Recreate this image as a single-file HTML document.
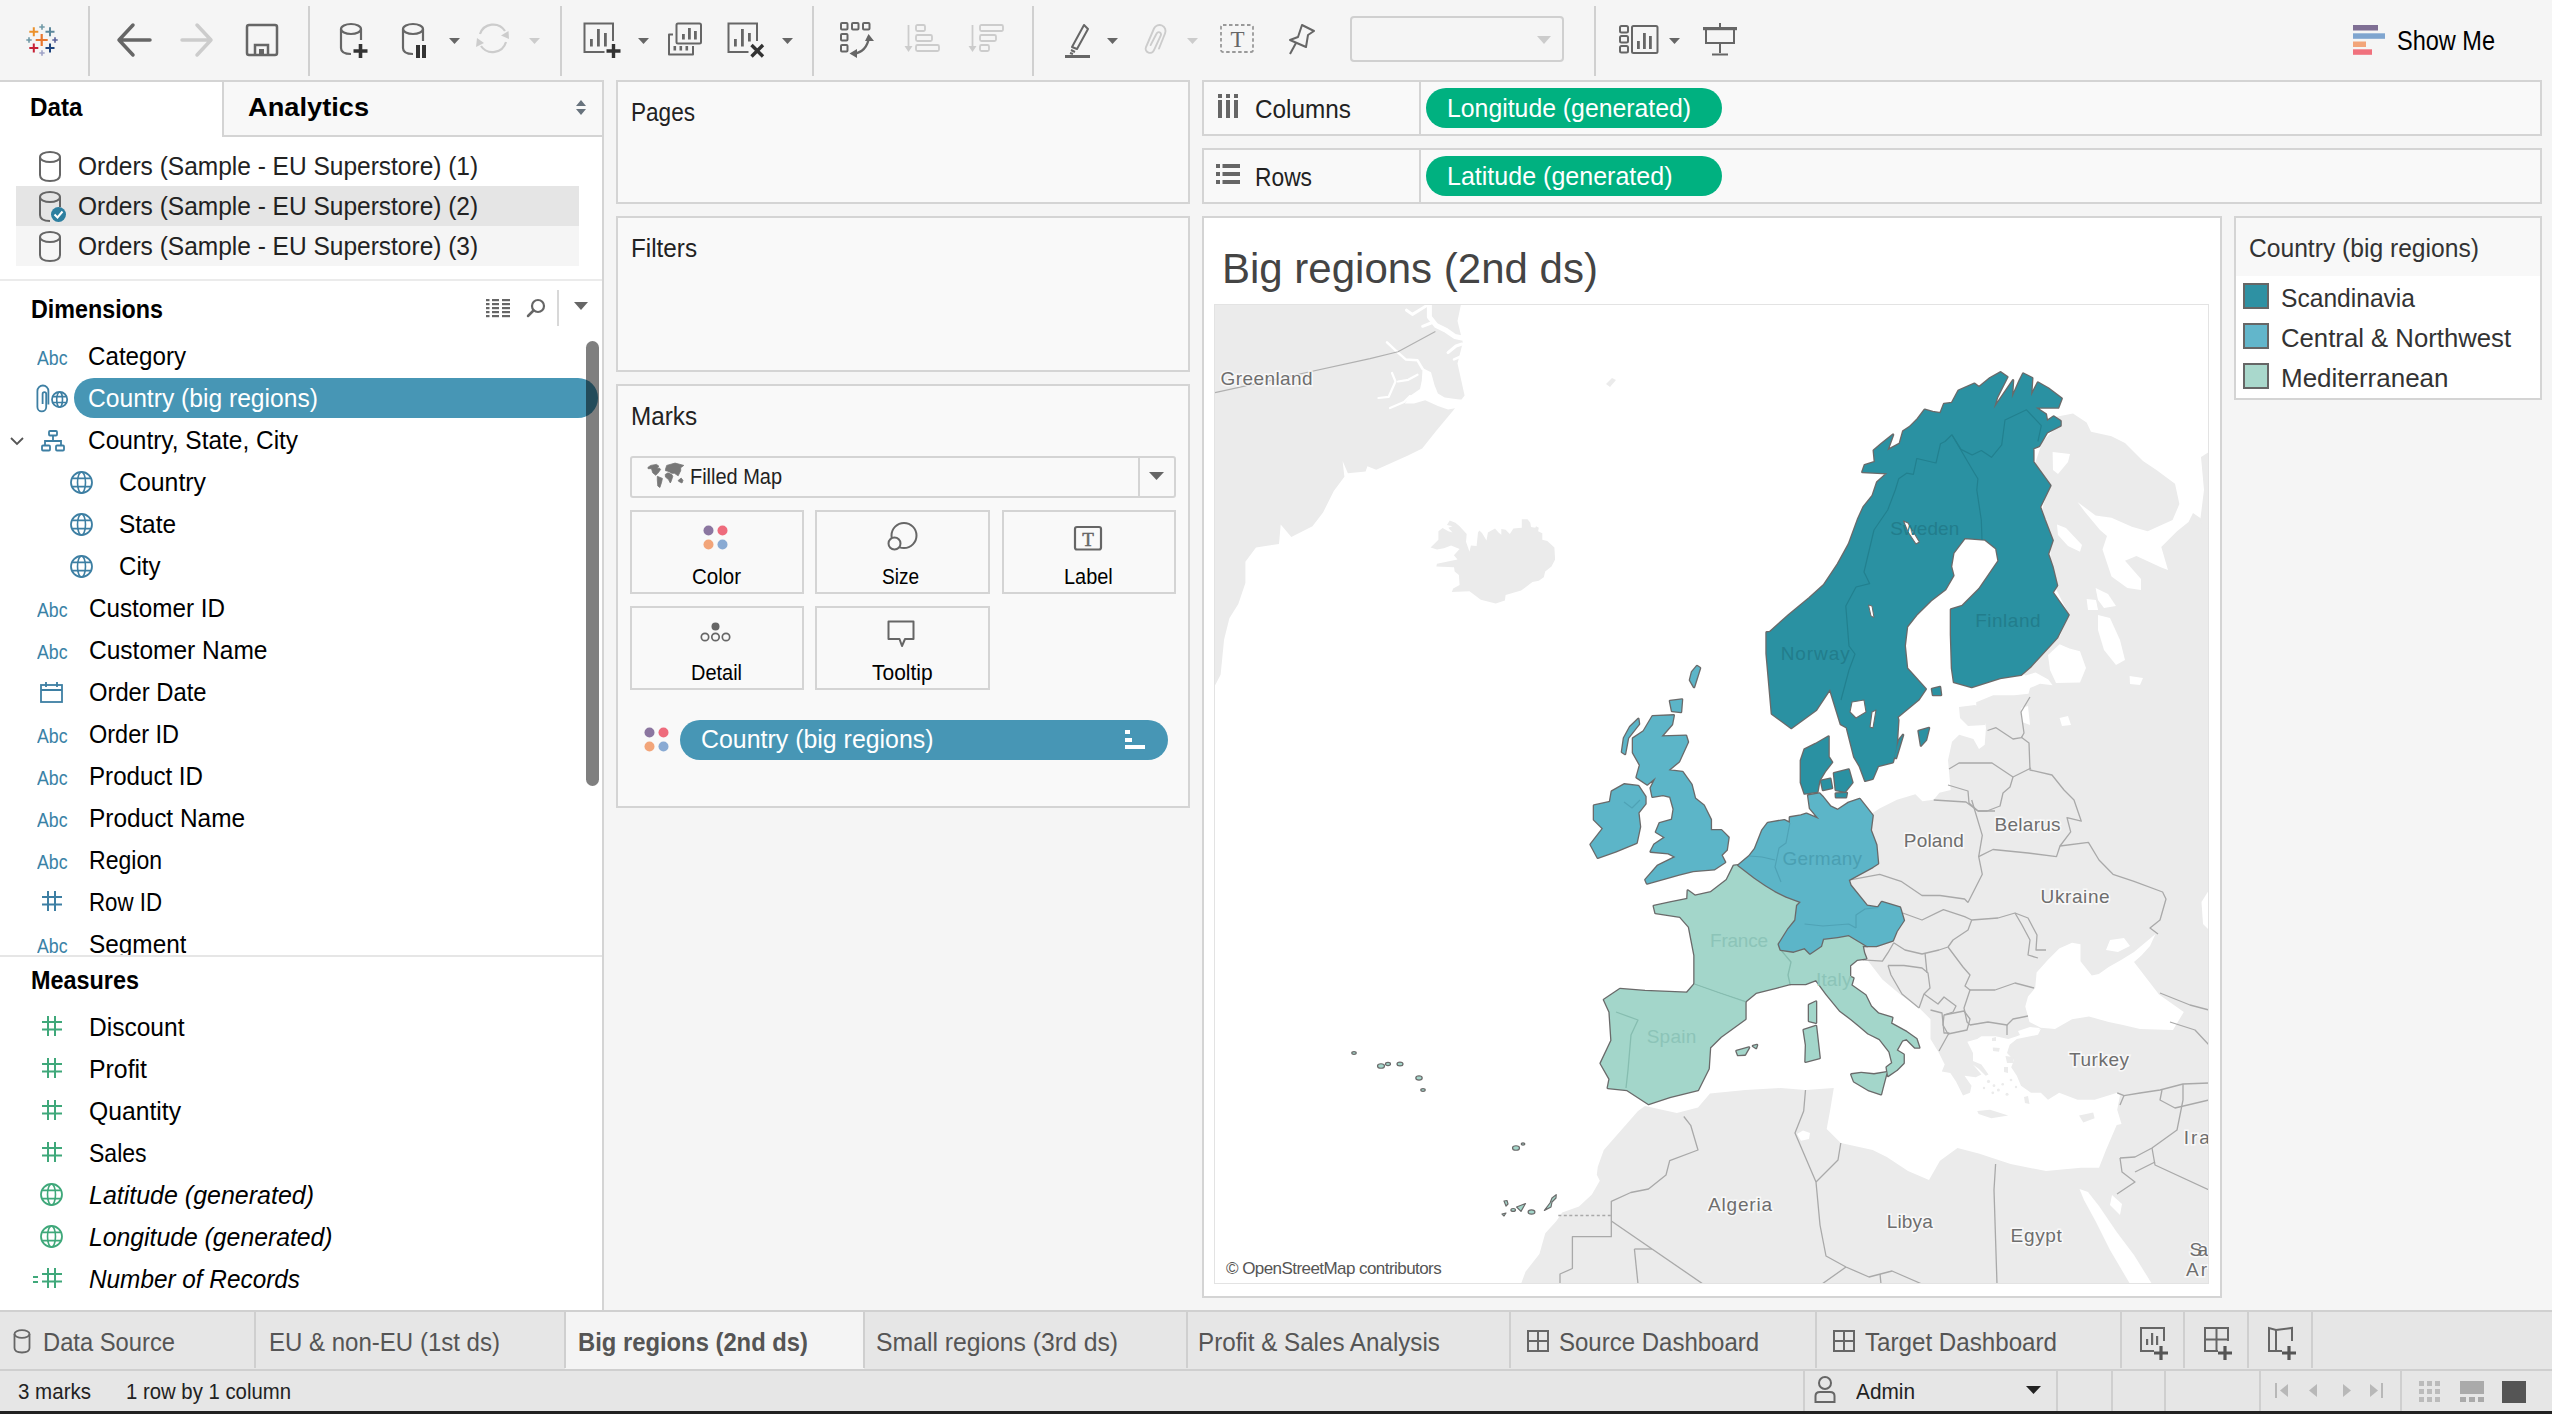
<!DOCTYPE html>
<html><head><meta charset="utf-8">
<style>
*{margin:0;padding:0;box-sizing:border-box}
html,body{width:2552px;height:1414px;overflow:hidden;background:#f5f5f5;font-family:"Liberation Sans",sans-serif;color:#000;position:relative}
.a{position:absolute}
.t{position:absolute;white-space:nowrap;line-height:1}
svg{position:absolute;overflow:visible}
</style></head><body>
<div class="a" style="left:0px;top:0px;width:2552px;height:80px;background:#f5f5f5;"></div>
<div class="a" style="left:0px;top:80px;width:603px;height:1230px;background:#fff;"></div>
<div class="a" style="left:0px;top:80px;width:604px;height:2px;background:#d4d4d4;"></div>
<div class="a" style="left:602px;top:80px;width:2px;height:1230px;background:#d4d4d4;"></div>
<div class="a" style="left:222px;top:82px;width:380px;height:55px;background:#f8f8f8;border-left:2px solid #d4d4d4;border-bottom:2px solid #d4d4d4"></div>
<div class="t" style="left:30.0px;top:94.0px;font-size:26px;color:#000;transform:scaleX(0.932);transform-origin:0 0;font-weight:bold;">Data</div>
<div class="t" style="left:248.0px;top:94.0px;font-size:26px;color:#000;transform:scaleX(1.047);transform-origin:0 0;font-weight:bold;">Analytics</div>
<svg style="left:574px;top:99px" width="14" height="18" viewBox="0 0 14 18"><path d="M7 1 L12 7 H2Z M2 10 H12 L7 16Z" fill="#68737d"/></svg>
<div class="a" style="left:88px;top:6px;width:2px;height:70px;background:#d0d0d0;"></div>
<div class="a" style="left:308px;top:6px;width:2px;height:70px;background:#d0d0d0;"></div>
<div class="a" style="left:560px;top:6px;width:2px;height:70px;background:#d0d0d0;"></div>
<div class="a" style="left:812px;top:6px;width:2px;height:70px;background:#d0d0d0;"></div>
<div class="a" style="left:1032px;top:6px;width:2px;height:70px;background:#d0d0d0;"></div>
<div class="a" style="left:1594px;top:6px;width:2px;height:70px;background:#d0d0d0;"></div>
<svg style="left:0px;top:0px" width="90" height="80" viewBox="0 0 90 80"><path d="M35.7 40H47.7M41.7 34V46" stroke="#e8762d" stroke-width="2.2"/><path d="M29.299999999999997 31.8H38.3M33.8 27.3V36.3" stroke="#eb912b" stroke-width="2"/><path d="M45.5 31.8H54.5M50 27.3V36.3" stroke="#5b879b" stroke-width="2"/><path d="M29.299999999999997 48H38.3M33.8 43.5V52.5" stroke="#c72035" stroke-width="2"/><path d="M45.5 48H54.5M50 43.5V52.5" stroke="#1f457e" stroke-width="2"/><path d="M39.3 27H44.7M42 24.3V29.7" stroke="#7099a6" stroke-width="1.6"/><path d="M39.3 53H44.7M42 50.3V55.7" stroke="#9fa3c7" stroke-width="1.6"/><path d="M26.3 40H31.7M29 37.3V42.7" stroke="#7099a6" stroke-width="1.6"/><path d="M52.3 40H57.7M55 37.3V42.7" stroke="#59629b" stroke-width="1.6"/></svg>
<svg style="left:115px;top:22px" width="40" height="38" viewBox="0 0 40 38"><path d="M18 3 L4 18 L18 33 M4 18 H35" fill="none" stroke="#666" stroke-width="3.5" stroke-linecap="round" stroke-linejoin="round"/></svg>
<svg style="left:179px;top:22px" width="40" height="38" viewBox="0 0 40 38"><path d="M18 3 L32 18 L18 33 M32 18 H3" fill="none" stroke="#cccccc" stroke-width="3.5" stroke-linecap="round" stroke-linejoin="round"/></svg>
<svg style="left:245px;top:23px" width="36" height="36" viewBox="0 0 36 36"><rect x="2" y="2" width="30" height="30" rx="2" fill="none" stroke="#666" stroke-width="2.5"/><path d="M10 32V22H23V32" fill="none" stroke="#666" stroke-width="2.5"/><rect x="14" y="26" width="5" height="6" fill="#666"/></svg>
<svg style="left:340px;top:23px" width="32" height="36" viewBox="0 0 32 36"><ellipse cx="11" cy="6" rx="10" ry="5" fill="none" stroke="#666" stroke-width="2.2"/><path d="M1 6V25C1 29 5 31 11 31M21 6V17" fill="none" stroke="#666" stroke-width="2.2"/><path d="M20.5 21V35M13.5 28H27.5" stroke="#333" stroke-width="3.6"/></svg>
<svg style="left:402px;top:23px" width="32" height="36" viewBox="0 0 32 36"><ellipse cx="11" cy="6" rx="10" ry="5" fill="none" stroke="#666" stroke-width="2.2"/><path d="M1 6V25C1 29 5 31 11 31M21 6V18" fill="none" stroke="#666" stroke-width="2.2"/><rect x="14" y="22" width="4" height="13" fill="#333"/><rect x="20" y="22" width="4" height="13" fill="#333"/></svg>
<svg style="left:449px;top:38px" width="12" height="7" viewBox="0 0 12 7"><path d="M0 0H11L5.5 6Z" fill="#666"/></svg>
<svg style="left:476px;top:23px" width="36" height="34" viewBox="0 0 36 34"><path d="M4 11 A14 14 0 0 1 29 8 M30 19 A14 14 0 0 1 5 23" fill="none" stroke="#cccccc" stroke-width="2.2"/><path d="M32.5 8 L25 12.5 L33 16Z M0 24 L8 20 L1 15Z" fill="#cccccc"/></svg>
<svg style="left:529px;top:38px" width="12" height="7" viewBox="0 0 12 7"><path d="M0 0H11L5.5 6Z" fill="#cccccc"/></svg>
<svg style="left:583px;top:22px" width="40" height="40" viewBox="0 0 40 40"><path d="M21.5 30H1.5V1.5H30V19" fill="none" stroke="#666" stroke-width="2"/><rect x="7" y="17" width="2.8" height="7.5" fill="#666"/><rect x="14" y="7" width="2.8" height="17.5" fill="#666"/><rect x="21" y="11" width="2.8" height="13.5" fill="#666"/><path d="M30.5 22V36M23.5 29H37.5" stroke="#333" stroke-width="3.4"/></svg>
<svg style="left:638px;top:38px" width="12" height="7" viewBox="0 0 12 7"><path d="M0 0H11L5.5 6Z" fill="#666"/></svg>
<svg style="left:667px;top:22px" width="40" height="36" viewBox="0 0 40 36"><rect x="9.5" y="1.5" width="24.5" height="20" rx="1.5" fill="none" stroke="#666" stroke-width="2"/><path d="M6 12.5H2V32.5H26V24" fill="none" stroke="#666" stroke-width="2" stroke-linejoin="round"/><rect x="15" y="12" width="2.8" height="5.5" fill="#666"/><rect x="21" y="6" width="2.8" height="11.5" fill="#666"/><rect x="27" y="9" width="2.8" height="8.5" fill="#666"/><rect x="6.5" y="24" width="2.6" height="4.5" fill="#666"/><rect x="12.5" y="24" width="2.6" height="4.5" fill="#666"/><rect x="18.5" y="24" width="2.6" height="4.5" fill="#666"/></svg>
<svg style="left:727px;top:22px" width="40" height="40" viewBox="0 0 40 40"><path d="M21.5 30H1.5V1.5H30V19" fill="none" stroke="#666" stroke-width="2"/><rect x="7" y="17" width="2.8" height="7.5" fill="#666"/><rect x="14" y="7" width="2.8" height="17.5" fill="#666"/><rect x="21" y="11" width="2.8" height="8.5" fill="#666"/><path d="M24.5 23L36 34.5M36 23L24.5 34.5" stroke="#333" stroke-width="3.4"/></svg>
<svg style="left:782px;top:38px" width="12" height="7" viewBox="0 0 12 7"><path d="M0 0H11L5.5 6Z" fill="#666"/></svg>
<svg style="left:840px;top:22px" width="40" height="40" viewBox="0 0 40 40"><rect x="1" y="1" width="6.5" height="6.5" rx="1" fill="none" stroke="#666" stroke-width="2"/><rect x="12" y="1" width="6.5" height="6.5" rx="1" fill="none" stroke="#666" stroke-width="2"/><rect x="23" y="1" width="6.5" height="6.5" rx="1" fill="none" stroke="#666" stroke-width="2"/><rect x="1" y="12" width="6.5" height="6.5" rx="1" fill="none" stroke="#666" stroke-width="2"/><rect x="1" y="23" width="6.5" height="6.5" rx="1" fill="none" stroke="#666" stroke-width="2"/><path d="M29 15 Q27 30 13 32" fill="none" stroke="#666" stroke-width="2.2"/><path d="M28.5 12 L34 19 L25 19Z M9.5 31.5 L17 27 L17 36Z" fill="#666"/></svg>
<svg style="left:903px;top:24px" width="40" height="32" viewBox="0 0 40 32"><path d="M5.5 1V25" stroke="#cccccc" stroke-width="1.8"/><path d="M1.5 22 H9.5 L5.5 28Z" fill="#cccccc"/><rect x="13" y="1" width="9" height="6" rx="1.5" fill="none" stroke="#cccccc" stroke-width="1.8"/><rect x="13" y="11" width="16" height="6" rx="1.5" fill="none" stroke="#cccccc" stroke-width="1.8"/><rect x="13" y="21" width="23" height="6" rx="1.5" fill="none" stroke="#cccccc" stroke-width="1.8"/></svg>
<svg style="left:967px;top:24px" width="40" height="32" viewBox="0 0 40 32"><path d="M5.5 1V25" stroke="#cccccc" stroke-width="1.8"/><path d="M1.5 22 H9.5 L5.5 28Z" fill="#cccccc"/><rect x="13" y="1" width="23" height="6" rx="1.5" fill="none" stroke="#cccccc" stroke-width="1.8"/><rect x="13" y="11" width="16" height="6" rx="1.5" fill="none" stroke="#cccccc" stroke-width="1.8"/><rect x="13" y="21" width="9" height="6" rx="1.5" fill="none" stroke="#cccccc" stroke-width="1.8"/></svg>
<svg style="left:1064px;top:22px" width="40" height="40" viewBox="0 0 40 40"><path d="M20 3 L24 7 L13 27 L8 25Z" fill="none" stroke="#666" stroke-width="2" stroke-linejoin="round"/><path d="M7 28 L11 30 M6 31 L9 32" stroke="#666" stroke-width="2"/><rect x="1" y="33" width="25" height="3" fill="#666"/></svg>
<svg style="left:1107px;top:38px" width="12" height="7" viewBox="0 0 12 7"><path d="M0 0H11L5.5 6Z" fill="#666"/></svg>
<svg style="left:1140px;top:24px" width="30" height="32" viewBox="0 0 30 32"><path d="M10.6 21.1 L16.6 9.5 A2.3 2.3 0 0 1 20.8 11.4 L14 26.2 A4.3 4.3 0 0 1 6 23 L14 4.5 A5.8 5.8 0 0 1 25 9.5 L19 24.5" fill="none" stroke="#cccccc" stroke-width="1.9" stroke-linecap="round"/></svg>
<svg style="left:1187px;top:38px" width="12" height="7" viewBox="0 0 12 7"><path d="M0 0H11L5.5 6Z" fill="#cccccc"/></svg>
<svg style="left:1220px;top:24px" width="36" height="31" viewBox="0 0 36 31"><rect x="1" y="1" width="32" height="27" rx="2" fill="none" stroke="#999" stroke-width="1.8" stroke-dasharray="3.5 2.5"/><text x="17.5" y="23" text-anchor="middle" font-family="Liberation Serif" font-size="23" fill="#666">T</text></svg>
<svg style="left:1286px;top:23px" width="32" height="34" viewBox="0 0 32 34"><path d="M16 2 L28 8 L22 12 L20 24 L4 17 L12 14Z" fill="none" stroke="#666" stroke-width="2" stroke-linejoin="round"/><path d="M10 20 L4 31" stroke="#666" stroke-width="2"/></svg>
<div class="a" style="left:1350px;top:16px;width:214px;height:46px;background:transparent;border:2px solid #d0d0d0;border-radius:4px"></div>
<svg style="left:1537px;top:36px" width="16" height="9" viewBox="0 0 16 9"><path d="M0 0H14L7 8Z" fill="#cccccc"/></svg>
<svg style="left:1619px;top:25px" width="44" height="32" viewBox="0 0 44 32"><rect x="1" y="1" width="8" height="6.5" rx="1.5" fill="none" stroke="#666" stroke-width="2"/><rect x="1" y="11" width="8" height="6.5" rx="1.5" fill="none" stroke="#666" stroke-width="2"/><rect x="1" y="21" width="8" height="6.5" rx="1.5" fill="none" stroke="#666" stroke-width="2"/><rect x="13" y="1" width="25.5" height="27" rx="1.5" fill="none" stroke="#666" stroke-width="2"/><rect x="18" y="16" width="2.8" height="8" fill="#666"/><rect x="24" y="8" width="2.8" height="16" fill="#666"/><rect x="30" y="11" width="2.8" height="13" fill="#666"/></svg>
<svg style="left:1669px;top:38px" width="12" height="7" viewBox="0 0 12 7"><path d="M0 0H11L5.5 6Z" fill="#666"/></svg>
<svg style="left:1702px;top:23px" width="38" height="36" viewBox="0 0 38 36"><rect x="1" y="4" width="34" height="3.2" fill="#666"/><path d="M18 0V4 M4 7V20H32V7 M18 20V30 M10 31.5H26" fill="none" stroke="#666" stroke-width="2"/></svg>
<svg style="left:2353px;top:25px" width="36" height="32" viewBox="0 0 36 32"><rect x="0" y="0" width="25" height="5.5" fill="#7f6f94"/><rect x="0" y="8.3" width="32" height="5.5" fill="#7fa5cf"/><rect x="0" y="16.5" width="13" height="5.5" fill="#f2a57a"/><rect x="0" y="24.3" width="19" height="5.5" fill="#f0717d"/></svg>
<div class="t" style="left:2397.0px;top:28.1px;font-size:27px;color:#000;transform:scaleX(0.871);transform-origin:0 0;">Show Me</div>
<div class="a" style="left:16px;top:186px;width:563px;height:40px;background:#e5e5e5;"></div>
<div class="a" style="left:16px;top:226px;width:563px;height:40px;background:#f5f5f5;"></div>
<svg style="left:39px;top:151px" width="24" height="34" viewBox="0 0 24 34"><ellipse cx="11" cy="6" rx="10" ry="5" fill="none" stroke="#666" stroke-width="2"/><path d="M1 6V24C1 28 5 30 11 30C17 30 21 28 21 24V6" fill="none" stroke="#666" stroke-width="2"/></svg>
<div class="t" style="left:78.0px;top:153.0px;font-size:26px;color:#222;transform:scaleX(0.942);transform-origin:0 0;">Orders (Sample - EU Superstore) (1)</div>
<svg style="left:39px;top:191px" width="28" height="34" viewBox="0 0 28 34"><ellipse cx="11" cy="6" rx="10" ry="5" fill="none" stroke="#666" stroke-width="2"/><path d="M1 6V24C1 28 5 30 11 30M21 6V16" fill="none" stroke="#666" stroke-width="2"/><circle cx="19.5" cy="23.5" r="7.5" fill="#2d7fa0"/><path d="M15.5 23.5 L18.5 26.5 L23.5 20.5" fill="none" stroke="#fff" stroke-width="2"/></svg>
<div class="t" style="left:78.0px;top:193.0px;font-size:26px;color:#222;transform:scaleX(0.942);transform-origin:0 0;">Orders (Sample - EU Superstore) (2)</div>
<svg style="left:39px;top:231px" width="24" height="34" viewBox="0 0 24 34"><ellipse cx="11" cy="6" rx="10" ry="5" fill="none" stroke="#666" stroke-width="2"/><path d="M1 6V24C1 28 5 30 11 30C17 30 21 28 21 24V6" fill="none" stroke="#666" stroke-width="2"/></svg>
<div class="t" style="left:78.0px;top:233.0px;font-size:26px;color:#222;transform:scaleX(0.942);transform-origin:0 0;">Orders (Sample - EU Superstore) (3)</div>
<div class="a" style="left:0px;top:279px;width:602px;height:2px;background:#ebebeb;"></div>
<div class="t" style="left:31.0px;top:295.5px;font-size:26px;color:#000;transform:scaleX(0.896);transform-origin:0 0;font-weight:bold;">Dimensions</div>
<svg style="left:486px;top:298px" width="26" height="20" viewBox="0 0 26 20"><rect x="0" y="1" width="3.5" height="2.2" fill="#666"/><rect x="6" y="1" width="7" height="2.2" fill="#666"/><rect x="16" y="1" width="8" height="2.2" fill="#666"/><rect x="0" y="5" width="3.5" height="2.2" fill="#666"/><rect x="6" y="5" width="7" height="2.2" fill="#666"/><rect x="16" y="5" width="8" height="2.2" fill="#666"/><rect x="0" y="9" width="3.5" height="2.2" fill="#666"/><rect x="6" y="9" width="7" height="2.2" fill="#666"/><rect x="16" y="9" width="8" height="2.2" fill="#666"/><rect x="0" y="13" width="3.5" height="2.2" fill="#666"/><rect x="6" y="13" width="7" height="2.2" fill="#666"/><rect x="16" y="13" width="8" height="2.2" fill="#666"/><rect x="0" y="17" width="3.5" height="2.2" fill="#666"/><rect x="6" y="17" width="7" height="2.2" fill="#666"/><rect x="16" y="17" width="8" height="2.2" fill="#666"/></svg>
<svg style="left:526px;top:298px" width="22" height="22" viewBox="0 0 22 22"><circle cx="12" cy="8" r="6" fill="none" stroke="#666" stroke-width="2.2"/><path d="M7.5 12.5 L2 18" stroke="#666" stroke-width="2.5" stroke-linecap="round"/></svg>
<div class="a" style="left:557px;top:290px;width:2px;height:36px;background:#d8d8d8;"></div>
<svg style="left:574px;top:302px" width="16" height="10" viewBox="0 0 16 10"><path d="M0 0H14L7 8Z" fill="#666"/></svg>
<div class="a" style="left:74px;top:378px;width:524px;height:40px;background:#4796b5;border-radius:20px"></div>
<div class="t" style="left:37.0px;top:348.5px;font-size:19.5px;color:#3a82a6;transform:scaleX(0.908);transform-origin:0 0;">Abc</div>
<div class="t" style="left:88.0px;top:343.0px;font-size:26px;color:#000;transform:scaleX(0.929);transform-origin:0 0;">Category</div>
<svg style="left:0px;top:340px" width="80" height="80" viewBox="0 340 80 80"><path d="M48.4 404.5 V391 A5.5 5.5 0 0 0 37.4 391 V407 A4.4 4.4 0 0 0 46.2 407 V394 A1.8 1.8 0 0 0 42.6 394 V404" fill="none" stroke="#3d7fa3" stroke-width="1.8"/></svg>
<svg style="left:51px;top:391.4px" width="17" height="17" viewBox="0 0 17 17"><circle cx="8.6" cy="8.6" r="7.6" fill="none" stroke="#3d7fa3" stroke-width="1.8"/><ellipse cx="8.6" cy="8.6" rx="2.89" ry="7.6" fill="none" stroke="#3d7fa3" stroke-width="1.6"/><path d="M1.61 5.64H15.59M1.61 11.56H15.59" stroke="#3d7fa3" stroke-width="1.6"/></svg>
<div class="t" style="left:88.0px;top:385.0px;font-size:26px;color:#fff;transform:scaleX(0.947);transform-origin:0 0;">Country (big regions)</div>
<svg style="left:41px;top:430px" width="26" height="24" viewBox="0 0 26 24"><rect x="8" y="1" width="8" height="4.5" rx="1" fill="none" stroke="#3d7fa3" stroke-width="1.8"/><path d="M12 5.5V11M4 15V11H20V15" fill="none" stroke="#3d7fa3" stroke-width="1.8"/><rect x="1" y="15.5" width="8" height="5" rx="1" fill="none" stroke="#3d7fa3" stroke-width="1.8"/><rect x="15" y="15.5" width="8" height="5" rx="1" fill="none" stroke="#3d7fa3" stroke-width="1.8"/></svg>
<svg style="left:9.5px;top:437px" width="16" height="10" viewBox="0 0 16 10"><path d="M1 1L7 7L13 1" fill="none" stroke="#555" stroke-width="1.8"/></svg>
<div class="t" style="left:88.0px;top:427.0px;font-size:26px;color:#000;transform:scaleX(0.940);transform-origin:0 0;">Country, State, City</div>
<svg style="left:70px;top:471px" width="24" height="24" viewBox="0 0 24 24"><circle cx="11.5" cy="11.5" r="10.5" fill="none" stroke="#3d7fa3" stroke-width="1.8"/><ellipse cx="11.5" cy="11.5" rx="3.99" ry="10.5" fill="none" stroke="#3d7fa3" stroke-width="1.6"/><path d="M1.84 7.41H21.16M1.84 15.59H21.16" stroke="#3d7fa3" stroke-width="1.6"/></svg>
<div class="t" style="left:119.0px;top:469.0px;font-size:26px;color:#000;transform:scaleX(0.956);transform-origin:0 0;">Country</div>
<svg style="left:70px;top:513px" width="24" height="24" viewBox="0 0 24 24"><circle cx="11.5" cy="11.5" r="10.5" fill="none" stroke="#3d7fa3" stroke-width="1.8"/><ellipse cx="11.5" cy="11.5" rx="3.99" ry="10.5" fill="none" stroke="#3d7fa3" stroke-width="1.6"/><path d="M1.84 7.41H21.16M1.84 15.59H21.16" stroke="#3d7fa3" stroke-width="1.6"/></svg>
<div class="t" style="left:119.0px;top:511.0px;font-size:26px;color:#000;transform:scaleX(0.939);transform-origin:0 0;">State</div>
<svg style="left:70px;top:555px" width="24" height="24" viewBox="0 0 24 24"><circle cx="11.5" cy="11.5" r="10.5" fill="none" stroke="#3d7fa3" stroke-width="1.8"/><ellipse cx="11.5" cy="11.5" rx="3.99" ry="10.5" fill="none" stroke="#3d7fa3" stroke-width="1.6"/><path d="M1.84 7.41H21.16M1.84 15.59H21.16" stroke="#3d7fa3" stroke-width="1.6"/></svg>
<div class="t" style="left:119.0px;top:553.0px;font-size:26px;color:#000;transform:scaleX(0.927);transform-origin:0 0;">City</div>
<div class="t" style="left:37.0px;top:600.5px;font-size:19.5px;color:#3a82a6;transform:scaleX(0.908);transform-origin:0 0;">Abc</div>
<div class="t" style="left:89.0px;top:595.0px;font-size:26px;color:#000;transform:scaleX(0.932);transform-origin:0 0;">Customer ID</div>
<div class="t" style="left:37.0px;top:642.5px;font-size:19.5px;color:#3a82a6;transform:scaleX(0.908);transform-origin:0 0;">Abc</div>
<div class="t" style="left:89.0px;top:637.0px;font-size:26px;color:#000;transform:scaleX(0.943);transform-origin:0 0;">Customer Name</div>
<svg style="left:40px;top:682px" width="24" height="22" viewBox="0 0 24 22"><rect x="1" y="3" width="21" height="17" fill="none" stroke="#3d7fa3" stroke-width="1.8"/><path d="M1 8H22M6 0V5M17 0V5" stroke="#3d7fa3" stroke-width="1.8"/></svg>
<div class="t" style="left:89.0px;top:679.0px;font-size:26px;color:#000;transform:scaleX(0.914);transform-origin:0 0;">Order Date</div>
<div class="t" style="left:37.0px;top:726.5px;font-size:19.5px;color:#3a82a6;transform:scaleX(0.908);transform-origin:0 0;">Abc</div>
<div class="t" style="left:89.0px;top:721.0px;font-size:26px;color:#000;transform:scaleX(0.903);transform-origin:0 0;">Order ID</div>
<div class="t" style="left:37.0px;top:768.5px;font-size:19.5px;color:#3a82a6;transform:scaleX(0.908);transform-origin:0 0;">Abc</div>
<div class="t" style="left:89.0px;top:763.0px;font-size:26px;color:#000;transform:scaleX(0.928);transform-origin:0 0;">Product ID</div>
<div class="t" style="left:37.0px;top:810.5px;font-size:19.5px;color:#3a82a6;transform:scaleX(0.908);transform-origin:0 0;">Abc</div>
<div class="t" style="left:89.0px;top:805.0px;font-size:26px;color:#000;transform:scaleX(0.939);transform-origin:0 0;">Product Name</div>
<div class="t" style="left:37.0px;top:852.5px;font-size:19.5px;color:#3a82a6;transform:scaleX(0.908);transform-origin:0 0;">Abc</div>
<div class="t" style="left:89.0px;top:847.0px;font-size:26px;color:#000;transform:scaleX(0.886);transform-origin:0 0;">Region</div>
<svg style="left:41px;top:890px" width="22" height="22" viewBox="0 0 22 22"><path d="M7 1V21M14 1V21M1 7H21M1 14.5H21" stroke="#3d7fa3" stroke-width="2"/></svg>
<div class="t" style="left:89.0px;top:889.0px;font-size:26px;color:#000;transform:scaleX(0.856);transform-origin:0 0;">Row ID</div>
<div class="t" style="left:37.0px;top:936.5px;font-size:19.5px;color:#3a82a6;transform:scaleX(0.908);transform-origin:0 0;">Abc</div>
<div class="t" style="left:89.0px;top:931.0px;font-size:26px;color:#000;transform:scaleX(0.937);transform-origin:0 0;height:24.5px;overflow:hidden;">Segment</div>
<div class="a" style="left:0px;top:955px;width:602px;height:2px;background:#e6e6e6;"></div>
<div class="a" style="left:586px;top:341px;width:13px;height:445px;background:rgba(0,0,0,0.5);border-radius:7px"></div>
<div class="t" style="left:31.0px;top:967.0px;font-size:26px;color:#000;transform:scaleX(0.900);transform-origin:0 0;font-weight:bold;">Measures</div>
<svg style="left:41px;top:1014.8px" width="22" height="22" viewBox="0 0 22 22"><path d="M7 1V21M14 1V21M1 7H21M1 14.5H21" stroke="#3fa87a" stroke-width="2"/></svg>
<div class="t" style="left:88.8px;top:1013.8px;font-size:26px;color:#000;transform:scaleX(0.944);transform-origin:0 0;">Discount</div>
<svg style="left:41px;top:1056.8px" width="22" height="22" viewBox="0 0 22 22"><path d="M7 1V21M14 1V21M1 7H21M1 14.5H21" stroke="#3fa87a" stroke-width="2"/></svg>
<div class="t" style="left:88.8px;top:1055.8px;font-size:26px;color:#000;transform:scaleX(0.956);transform-origin:0 0;">Profit</div>
<svg style="left:41px;top:1098.8px" width="22" height="22" viewBox="0 0 22 22"><path d="M7 1V21M14 1V21M1 7H21M1 14.5H21" stroke="#3fa87a" stroke-width="2"/></svg>
<div class="t" style="left:88.8px;top:1097.8px;font-size:26px;color:#000;transform:scaleX(0.950);transform-origin:0 0;">Quantity</div>
<svg style="left:41px;top:1140.8px" width="22" height="22" viewBox="0 0 22 22"><path d="M7 1V21M14 1V21M1 7H21M1 14.5H21" stroke="#3fa87a" stroke-width="2"/></svg>
<div class="t" style="left:88.8px;top:1139.8px;font-size:26px;color:#000;transform:scaleX(0.886);transform-origin:0 0;">Sales</div>
<svg style="left:40px;top:1182.8px" width="24" height="24" viewBox="0 0 24 24"><circle cx="11.5" cy="11.5" r="10.5" fill="none" stroke="#3fa87a" stroke-width="1.8"/><ellipse cx="11.5" cy="11.5" rx="3.99" ry="10.5" fill="none" stroke="#3fa87a" stroke-width="1.6"/><path d="M1.84 7.41H21.16M1.84 15.59H21.16" stroke="#3fa87a" stroke-width="1.6"/></svg>
<div class="t" style="left:89.0px;top:1181.8px;font-size:26px;color:#000;transform:scaleX(0.961);transform-origin:0 0;font-style:italic;">Latitude (generated)</div>
<svg style="left:40px;top:1224.8px" width="24" height="24" viewBox="0 0 24 24"><circle cx="11.5" cy="11.5" r="10.5" fill="none" stroke="#3fa87a" stroke-width="1.8"/><ellipse cx="11.5" cy="11.5" rx="3.99" ry="10.5" fill="none" stroke="#3fa87a" stroke-width="1.6"/><path d="M1.84 7.41H21.16M1.84 15.59H21.16" stroke="#3fa87a" stroke-width="1.6"/></svg>
<div class="t" style="left:89.0px;top:1223.8px;font-size:26px;color:#000;transform:scaleX(0.952);transform-origin:0 0;font-style:italic;">Longitude (generated)</div>
<svg style="left:41px;top:1266.8px" width="22" height="22" viewBox="0 0 22 22"><path d="M7 1V21M14 1V21M1 7H21M1 14.5H21" stroke="#3fa87a" stroke-width="2"/></svg>
<div class="a" style="left:33px;top:1275.8px;width:5px;height:2px;background:#3fa87a;"></div>
<div class="a" style="left:33px;top:1280.8px;width:5px;height:2px;background:#3fa87a;"></div>
<div class="t" style="left:89.0px;top:1265.8px;font-size:26px;color:#000;transform:scaleX(0.936);transform-origin:0 0;font-style:italic;">Number of Records</div>
<div class="a" style="left:616px;top:80px;width:574px;height:124px;background:#f9f9f9;border:2px solid #d4d4d4"></div>
<div class="t" style="left:631.0px;top:99.3px;font-size:26px;color:#222;transform:scaleX(0.868);transform-origin:0 0;">Pages</div>
<div class="a" style="left:616px;top:216px;width:574px;height:156px;background:#f9f9f9;border:2px solid #d4d4d4"></div>
<div class="t" style="left:631.0px;top:235.0px;font-size:26px;color:#222;transform:scaleX(0.933);transform-origin:0 0;">Filters</div>
<div class="a" style="left:616px;top:384px;width:574px;height:424px;background:#f9f9f9;border:2px solid #d4d4d4"></div>
<div class="t" style="left:631.0px;top:403.0px;font-size:26px;color:#222;transform:scaleX(0.933);transform-origin:0 0;">Marks</div>
<div class="a" style="left:630px;top:456px;width:546px;height:42px;background:#f9f9f9;border:2px solid #d4d4d4;border-radius:3px"></div>
<div class="a" style="left:1138px;top:458px;width:2px;height:38px;background:#d4d4d4;"></div>
<svg style="left:1149px;top:472px" width="16" height="10" viewBox="0 0 16 10"><path d="M0 0H15L7.5 8Z" fill="#666"/></svg>
<svg style="left:640px;top:458px" width="60" height="36" viewBox="0 0 60 36"><path d="M7.9 9.4 L10.7 7.4 L16.5 6.4 L18.8 8.1 L17.3 10.2 L19.6 10.2 L20.6 11.5 L17.8 15.3 L15.8 17.3 L12.7 14.8 L11.5 10.7 L8.1 10.7Z M17.3 18.3 L22.4 20.4 L21.6 24.2 L19.9 29.5 L17.8 28.0 L17.3 21.9Z M25.5 11.2 L26.7 7.4 L35.1 5.1 L43.8 7.4 L40.7 9.7 L40.7 12.7 L38.2 17.8 L34.4 15.3 L31.8 15.3 L28.0 13.2 L25.5 12.7Z M25.2 16.5 L28.0 14.8 L31.8 16.5 L32.8 18.3 L31.3 22.9 L30.3 25.0 L28.5 21.6 L25.5 19.1Z M38.2 22.4 L41.2 20.1 L43.0 22.4 L42.0 25.0 L38.7 23.4Z" fill="#777" stroke="#777" stroke-width="0.8" stroke-linejoin="round"/></svg>
<div class="t" style="left:690.0px;top:465.9px;font-size:22px;color:#222;transform:scaleX(0.907);transform-origin:0 0;">Filled Map</div>
<div class="a" style="left:630px;top:510px;width:174px;height:84px;background:#f9f9f9;border:2px solid #d4d4d4"></div>
<div class="a" style="left:815px;top:510px;width:175px;height:84px;background:#f9f9f9;border:2px solid #d4d4d4"></div>
<div class="a" style="left:1002px;top:510px;width:174px;height:84px;background:#f9f9f9;border:2px solid #d4d4d4"></div>
<div class="a" style="left:630px;top:606px;width:174px;height:84px;background:#f9f9f9;border:2px solid #d4d4d4"></div>
<div class="a" style="left:815px;top:606px;width:175px;height:84px;background:#f9f9f9;border:2px solid #d4d4d4"></div>
<div class="t" style="left:692.0px;top:566.4px;font-size:22px;color:#000;transform:scaleX(0.932);transform-origin:0 0;">Color</div>
<div class="t" style="left:882.3px;top:566.4px;font-size:22px;color:#000;transform:scaleX(0.865);transform-origin:0 0;">Size</div>
<div class="t" style="left:1064.0px;top:566.4px;font-size:22px;color:#000;transform:scaleX(0.905);transform-origin:0 0;">Label</div>
<div class="t" style="left:690.6px;top:662.4px;font-size:22px;color:#000;transform:scaleX(0.907);transform-origin:0 0;">Detail</div>
<div class="t" style="left:872.0px;top:662.4px;font-size:22px;color:#000;transform:scaleX(0.953);transform-origin:0 0;">Tooltip</div>
<svg style="left:703px;top:525px" width="26" height="26" viewBox="0 0 26 26"><circle cx="5.5" cy="5.5" r="5" fill="#8b76a0"/><circle cx="19.5" cy="5.5" r="5" fill="#ee6b7c"/><circle cx="5.5" cy="19.5" r="5" fill="#f2a57a"/><circle cx="19.5" cy="19.5" r="5" fill="#89aad3"/></svg>
<svg style="left:887px;top:523px" width="32" height="28" viewBox="0 0 32 28"><circle cx="17" cy="12.5" r="12.5" fill="none" stroke="#666" stroke-width="2"/><circle cx="7.5" cy="20.5" r="6" fill="#f9f9f9" stroke="#666" stroke-width="2"/></svg>
<svg style="left:1074px;top:526px" width="30" height="26" viewBox="0 0 30 26"><rect x="1" y="1" width="26" height="22.5" rx="2" fill="none" stroke="#666" stroke-width="2.2"/><text x="14" y="19.5" text-anchor="middle" font-family="Liberation Serif" font-size="19" fill="#666" stroke="#666" stroke-width="0.5">T</text></svg>
<svg style="left:700px;top:622px" width="32" height="24" viewBox="0 0 32 24"><circle cx="15.5" cy="4.5" r="4" fill="#666"/><circle cx="5" cy="15" r="3.7" fill="none" stroke="#666" stroke-width="1.7"/><circle cx="15.5" cy="15" r="3.7" fill="none" stroke="#666" stroke-width="1.7"/><circle cx="26" cy="15" r="3.7" fill="none" stroke="#666" stroke-width="1.7"/></svg>
<svg style="left:887px;top:620px" width="30" height="30" viewBox="0 0 30 30"><path d="M1.5 1.5H26.5V19H18L15 26L12.5 19H1.5Z" fill="none" stroke="#666" stroke-width="2" stroke-linejoin="round"/></svg>
<svg style="left:644px;top:727px" width="28" height="28" viewBox="0 0 28 28"><circle cx="5.5" cy="5.5" r="5" fill="#8b76a0"/><circle cx="19.5" cy="5.5" r="5" fill="#ee6b7c"/><circle cx="5.5" cy="19.5" r="5" fill="#f2a57a"/><circle cx="19.5" cy="19.5" r="5" fill="#89aad3"/></svg>
<div class="a" style="left:680px;top:720px;width:488px;height:40px;background:#4796b5;border-radius:20px"></div>
<div class="t" style="left:701.4px;top:725.5px;font-size:26px;color:#fff;transform:scaleX(0.958);transform-origin:0 0;">Country (big regions)</div>
<svg style="left:1124px;top:729px" width="22" height="22" viewBox="0 0 22 22"><rect x="1" y="1" width="5" height="4" fill="#fff"/><rect x="1" y="9" width="7" height="4" fill="#fff"/><rect x="1" y="16" width="20" height="4" fill="#fff"/></svg>
<div class="a" style="left:1202px;top:80px;width:1340px;height:56px;background:#f9f9f9;border:2px solid #d4d4d4"></div>
<div class="a" style="left:1419px;top:82px;width:2px;height:52px;background:#d4d4d4;"></div>
<div class="a" style="left:1202px;top:148px;width:1340px;height:56px;background:#f9f9f9;border:2px solid #d4d4d4"></div>
<div class="a" style="left:1419px;top:150px;width:2px;height:52px;background:#d4d4d4;"></div>
<svg style="left:1218px;top:94px" width="22" height="26" viewBox="0 0 22 26"><rect x="0" y="0" width="4" height="4" fill="#666"/><rect x="8" y="0" width="4" height="4" fill="#666"/><rect x="16" y="0" width="4" height="4" fill="#666"/><rect x="0" y="6" width="4" height="18" fill="#666"/><rect x="8" y="6" width="4" height="18" fill="#666"/><rect x="16" y="6" width="4" height="18" fill="#666"/></svg>
<div class="t" style="left:1254.7px;top:95.8px;font-size:26px;color:#222;transform:scaleX(0.936);transform-origin:0 0;">Columns</div>
<svg style="left:1216px;top:164px" width="26" height="22" viewBox="0 0 26 22"><rect x="0" y="0" width="4" height="4" fill="#666"/><rect x="6.5" y="0" width="17.5" height="4" fill="#666"/><rect x="0" y="8" width="4" height="4" fill="#666"/><rect x="6.5" y="8" width="17.5" height="4" fill="#666"/><rect x="0" y="16" width="4" height="4" fill="#666"/><rect x="6.5" y="16" width="17.5" height="4" fill="#666"/></svg>
<div class="t" style="left:1255.0px;top:164.0px;font-size:26px;color:#222;transform:scaleX(0.877);transform-origin:0 0;">Rows</div>
<div class="a" style="left:1426px;top:88px;width:296px;height:40px;background:#00b180;border-radius:20px"></div>
<div class="t" style="left:1447.3px;top:94.6px;font-size:26px;color:#fff;transform:scaleX(0.954);transform-origin:0 0;">Longitude (generated)</div>
<div class="a" style="left:1426px;top:156px;width:296px;height:40px;background:#00b180;border-radius:20px"></div>
<div class="t" style="left:1447.3px;top:162.6px;font-size:26px;color:#fff;transform:scaleX(0.963);transform-origin:0 0;">Latitude (generated)</div>
<div class="a" style="left:1202px;top:216px;width:1020px;height:1082px;background:#fff;border:2px solid #d4d4d4"></div>
<div class="t" style="left:1222.0px;top:248.1px;font-size:42px;color:#444;transform:scaleX(1.000);transform-origin:0 0;">Big regions (2nd ds)</div>
<svg style="left:1214px;top:304px" width="995" height="980" viewBox="1214 304 995 980"><defs><clipPath id="mc"><rect x="1214" y="304" width="995" height="980"/></clipPath></defs><g clip-path="url(#mc)"><path d="M1214.0 304.0 L1461.0 304.2 L1457.5 321.0 L1462.8 342.4 L1457.5 363.6 L1464.6 395.5 L1454.0 409.6 L1436.3 430.8 L1422.2 448.5 L1408.0 455.6 L1376.2 469.7 L1367.4 466.2 L1365.6 471.5 L1347.9 473.3 L1342.6 460.9 L1344.4 476.8 L1333.8 491.0 L1323.2 512.2 L1312.5 526.3 L1291.3 536.9 L1280.7 524.5 L1279.0 544.0 L1256.0 547.5 L1245.4 561.7 L1245.4 583.0 L1238.3 604.0 L1229.4 618.2 L1224.1 639.5 L1220.6 674.8 L1215.0 685.4 L1214.0 685.4Z" fill="#ebebeb"/><path d="M1422.6 367.9 L1431.0 372.2 L1434.5 384.9 L1437.9 393.4 L1444.7 397.6 L1457.4 399.3 L1466.0 400.0 L1458.3 407.8 L1448.0 409.5 L1437.9 406.0 L1425.2 400.2 L1414.0 403.6 L1404.8 403.6 L1409.9 396.0 L1420.0 389.0 L1421.8 380.6Z" fill="#ffffff"/><path d="M1406.5 310.2 L1412.4 314.4 L1419.2 310.2 L1426.0 306.0 L1429.4 304.0" fill="none" stroke="#fff" stroke-width="3" stroke-linecap="round" stroke-linejoin="round"/><path d="M1429.4 304.0 L1429.4 317.0 L1436.2 325.5 L1446.4 330.6 L1454.9 336.5 L1462.0 338.0" fill="none" stroke="#fff" stroke-width="5" stroke-linecap="round" stroke-linejoin="round"/><path d="M1422.6 326.3 L1431.0 323.0" fill="none" stroke="#fff" stroke-width="3" stroke-linecap="round" stroke-linejoin="round"/><path d="M1387.0 342.4 L1398.0 352.6 L1405.7 359.4 L1417.5 360.3 L1422.6 369.0" fill="none" stroke="#fff" stroke-width="2.5" stroke-linecap="round" stroke-linejoin="round"/><path d="M1392.0 373.0 L1395.5 381.5 L1388.7 396.8 L1378.5 398.0" fill="none" stroke="#fff" stroke-width="2.2" stroke-linecap="round" stroke-linejoin="round"/><path d="M1398.0 381.5 L1408.2 379.8 L1417.5 374.7" fill="none" stroke="#fff" stroke-width="2.2" stroke-linecap="round" stroke-linejoin="round"/><path d="M1390.0 408.0 L1404.0 402.0 L1410.0 396.0" fill="none" stroke="#fff" stroke-width="2.2" stroke-linecap="round" stroke-linejoin="round"/><path d="M1448.0 352.6 L1456.0 346.0 L1462.0 344.0" fill="none" stroke="#fff" stroke-width="3" stroke-linecap="round" stroke-linejoin="round"/><path d="M1454.0 359.4 L1462.0 356.0" fill="none" stroke="#fff" stroke-width="2.5" stroke-linecap="round" stroke-linejoin="round"/><path d="M1215.0 392.6 L1370.0 358.6 L1398.0 351.8 L1435.4 331.4" fill="none" stroke="#b0b0b0" stroke-width="1.1" stroke-linejoin="round"/><path d="M1430.6 547.5 L1438.4 539.7 L1438.4 531.2 L1442.6 528.0 L1448.3 531.2 L1452.5 532.6 L1448.3 527.7 L1452.5 526.3 L1446.9 524.9 L1449.7 520.6 L1455.4 522.7 L1459.6 526.3 L1466.7 534.0 L1466.0 541.8 L1469.5 551.7 L1470.9 545.4 L1476.6 546.0 L1478.0 532.6 L1479.4 530.5 L1482.2 533.3 L1486.5 540.4 L1487.9 532.6 L1495.0 528.4 L1498.5 532.6 L1501.3 534.8 L1501.3 529.1 L1505.6 529.8 L1509.8 534.0 L1513.4 528.4 L1521.8 527.7 L1521.8 519.2 L1527.5 519.2 L1530.3 522.7 L1531.0 527.0 L1535.3 527.7 L1536.0 526.3 L1538.8 527.7 L1538.1 531.2 L1542.3 533.3 L1542.3 539.7 L1547.3 541.1 L1554.4 547.5 L1555.1 559.5 L1551.5 566.6 L1545.2 571.5 L1543.8 577.2 L1538.8 580.7 L1532.4 582.1 L1521.1 590.6 L1505.6 594.9 L1504.9 600.5 L1495.7 603.4 L1480.8 599.8 L1469.5 591.3 L1451.8 592.0 L1453.2 588.5 L1459.6 585.0 L1458.9 575.0 L1454.7 571.5 L1454.0 567.3 L1436.3 566.6 L1437.0 563.7 L1457.5 559.5 L1453.9 555.3 L1459.6 548.9 L1451.1 545.4 L1444.0 548.2 L1437.0 549.6Z" fill="#ebebeb"/><path d="M1606.0 384.0 L1612.0 378.0 L1616.0 380.0 L1610.0 387.0Z" fill="#ebebeb"/><path d="M2056.5 416.7 L2073.0 413.6 L2086.6 422.6 L2091.0 431.7 L2111.5 436.2 L2125.0 443.0 L2143.0 461.0 L2156.8 470.2 L2175.0 483.8 L2179.4 504.0 L2172.6 520.0 L2147.7 531.3 L2131.9 526.8 L2111.5 517.7 L2095.6 515.5 L2077.5 501.9 L2085.0 512.0 L2100.0 530.0 L2107.0 536.0 L2102.5 549.4 L2111.5 576.6 L2127.4 588.0 L2141.0 590.0 L2141.0 579.0 L2125.0 560.7 L2136.4 556.0 L2161.3 567.6 L2168.0 570.0 L2161.3 547.0 L2177.0 531.3 L2188.5 522.0 L2193.0 513.0 L2209.0 524.0 L2209.0 1284.0 L1521.0 1284.0 L1525.5 1271.8 L1539.4 1254.0 L1545.3 1233.2 L1556.2 1221.3 L1562.2 1212.4 L1579.0 1206.4 L1591.9 1194.6 L1599.8 1180.7 L1596.8 1174.8 L1597.8 1166.8 L1603.8 1150.0 L1613.0 1139.5 L1638.0 1111.0 L1645.0 1106.0 L1676.8 1113.0 L1698.0 1107.6 L1710.0 1093.5 L1745.4 1090.0 L1780.7 1088.0 L1805.5 1090.0 L1833.8 1088.0 L1830.0 1111.0 L1826.7 1129.0 L1840.8 1143.0 L1872.7 1150.0 L1886.8 1157.0 L1908.0 1171.0 L1929.0 1180.0 L1940.0 1160.7 L1957.5 1148.0 L1978.7 1153.6 L2010.6 1164.0 L2046.0 1171.0 L2081.0 1167.7 L2099.0 1167.7 L2106.0 1150.0 L2116.7 1125.0 L2121.5 1124.0 L2117.2 1109.7 L2120.0 1095.6 L2117.2 1092.8 L2094.6 1099.8 L2077.6 1099.8 L2059.2 1092.8 L2048.0 1099.8 L2040.8 1092.8 L2031.0 1092.8 L2021.0 1085.7 L2016.8 1075.8 L2011.2 1067.3 L2014.0 1060.2 L2007.0 1053.0 L2009.7 1044.7 L2016.8 1039.0 L2038.0 1034.8 L2040.8 1029.0 L2028.0 1032.0 L2016.8 1036.2 L2008.3 1039.0 L1995.6 1036.2 L1981.4 1036.2 L1977.2 1039.0 L1967.3 1041.8 L1973.0 1053.0 L1973.0 1064.5 L1981.4 1074.4 L1975.8 1077.2 L1964.5 1075.8 L1971.5 1085.7 L1970.0 1092.8 L1963.0 1095.6 L1956.0 1081.4 L1950.3 1073.0 L1941.8 1071.5 L1944.7 1064.5 L1939.0 1053.0 L1930.5 1039.0 L1930.5 1019.2 L1919.2 1008.0 L1899.4 993.7 L1882.4 979.6 L1868.3 961.2 L1862.0 948.0 L1840.0 930.0 L1835.0 880.0 L1860.0 840.0 L1871.0 814.0 L1880.0 808.3 L1897.0 799.8 L1915.4 794.2 L1922.4 801.2 L1933.7 799.8 L1939.4 792.8 L1950.7 790.0 L1949.3 774.4 L1948.0 760.2 L1952.0 741.8 L1959.2 734.8 L1973.4 739.0 L1979.0 749.0 L1984.7 744.7 L1986.0 727.7 L1984.7 720.6 L1976.2 720.6 L1976.2 702.2 L1993.2 695.2 L2014.4 695.2 L2028.5 693.7 L2030.0 688.0 L2040.0 683.8 L2052.6 685.3 L2048.3 679.6 L2035.6 672.5 L2025.7 675.4 L2020.0 672.0 L2050.0 640.0 L2060.0 636.0 L2069.0 614.7 L2060.0 597.0 L2049.5 575.8 L2051.0 544.0 L2042.4 508.6 L2049.5 484.0 L2035.3 462.7 L2042.4 441.4 L2060.0 423.8Z" fill="#ebebeb"/><path d="M2201.0 457.0 L2209.0 452.0 L2209.0 530.0 L2200.0 522.0 L2204.0 490.0Z" fill="#ebebeb"/><path d="M2028.0 1016.4 L2025.3 1006.5 L2028.0 996.6 L2035.2 988.0 L2036.6 972.5 L2048.0 959.8 L2059.2 948.5 L2072.0 942.8 L2080.5 944.2 L2080.5 961.2 L2091.8 975.4 L2098.8 974.0 L2108.7 966.9 L2121.5 959.8 L2134.0 952.0 L2155.5 934.0 L2150.0 946.0 L2141.4 955.6 L2134.0 962.0 L2159.0 994.5 L2183.8 1012.0 L2173.0 1030.0 L2140.0 1029.0 L2123.0 1024.9 L2108.7 1022.0 L2089.0 1016.4 L2072.0 1019.2 L2055.0 1029.0 L2040.8 1027.7 L2029.5 1022.0Z" fill="#ffffff"/><path d="M2110.0 940.0 L2124.0 938.0 L2130.0 946.0 L2118.0 952.0 L2106.0 950.0Z" fill="#ffffff"/><path d="M2201.5 902.0 L2209.0 890.0 L2209.0 930.0 L2203.0 924.0Z" fill="#ffffff"/><path d="M2018.0 1031.0 L2030.0 1027.0 L2040.0 1028.0 L2036.0 1033.0 L2020.0 1035.0Z" fill="#ffffff"/><path d="M2079.5 1189.0 L2088.0 1192.0 L2099.0 1206.0 L2116.7 1232.0 L2134.0 1255.0 L2152.0 1284.0 L2130.0 1284.0 L2110.0 1250.0 L2096.0 1222.0 L2084.0 1200.0Z" fill="#ffffff"/><path d="M2112.0 1195.0 L2122.0 1204.0 L2120.0 1215.0 L2110.0 1205.0Z" fill="#ffffff"/><path d="M1959.0 707.0 L1975.0 705.0 L1987.0 712.0 L1985.0 725.0 L1968.0 726.0 L1960.0 718.0Z" fill="#ebebeb"/><path d="M1973.0 1061.0 L1981.4 1064.5 L1988.5 1074.4 L1985.7 1075.8 L1978.6 1068.7 L1972.0 1064.0Z" fill="#ebebeb"/><path d="M2005.5 1056.0 L2013.0 1057.0 L2014.0 1063.0 L2007.0 1063.0Z" fill="#ebebeb"/><path d="M2004.0 1067.0 L2008.0 1067.0 L2008.0 1073.0 L2004.0 1072.0Z" fill="#ebebeb"/><path d="M1992.8 1047.5 L1999.8 1048.0 L1999.0 1051.7 L1993.0 1051.0Z" fill="#ebebeb"/><path d="M2024.0 1097.0 L2028.0 1096.0 L2029.5 1104.0 L2025.0 1103.0Z" fill="#ebebeb"/><path d="M1992.0 1038.0 L1996.0 1037.0 L1996.0 1041.0 L1992.0 1041.0Z" fill="#ebebeb"/><circle cx="1988.5" cy="1081.4" r="1.6" fill="#ebebeb"/><circle cx="1994" cy="1085.7" r="1.4" fill="#ebebeb"/><circle cx="1998.4" cy="1090" r="1.5" fill="#ebebeb"/><circle cx="2002.7" cy="1084.3" r="1.3" fill="#ebebeb"/><circle cx="1992.8" cy="1092.8" r="1.4" fill="#ebebeb"/><circle cx="2007" cy="1094.2" r="1.5" fill="#ebebeb"/><circle cx="1984" cy="1088" r="1.2" fill="#ebebeb"/><circle cx="2011" cy="1080" r="1.3" fill="#ebebeb"/><circle cx="2016" cy="1087" r="1.2" fill="#ebebeb"/><path d="M1797.0 1134.0 L1803.0 1130.5 L1810.0 1133.0 L1809.0 1139.0 L1801.0 1140.7Z" fill="#ffffff"/><path d="M1977.2 1111.1 L1990.0 1109.7 L2008.3 1115.4 L1991.3 1118.2 L1978.6 1114.0Z" fill="#ebebeb"/><path d="M2079.0 1115.4 L2093.2 1112.6 L2094.6 1118.2 L2083.3 1122.5Z" fill="#ebebeb"/><path d="M2048.0 655.0 L2059.6 644.2 L2069.5 648.5 L2080.0 651.3 L2086.0 668.0 L2080.0 682.4 L2056.0 683.0 L2050.0 670.0Z" fill="#ffffff"/><path d="M2098.0 615.0 L2110.0 618.0 L2120.0 640.0 L2125.0 660.0 L2116.0 665.0 L2104.0 650.0 L2098.0 630.0Z" fill="#ffffff"/><path d="M2095.6 588.0 L2108.0 594.0 L2116.0 606.0 L2104.0 608.0 L2098.0 600.0Z" fill="#ffffff"/><path d="M2086.6 599.0 L2096.0 600.0 L2098.0 610.0 L2088.0 610.0Z" fill="#ffffff"/><path d="M2057.0 524.5 L2066.0 528.0 L2082.0 545.0 L2080.0 551.7 L2068.0 546.0 L2058.0 535.0Z" fill="#ffffff"/><path d="M2052.6 452.0 L2070.0 454.0 L2068.0 462.0 L2058.0 474.0 L2053.0 470.0Z" fill="#ffffff"/><path d="M2021.4 708.0 L2028.0 706.0 L2030.0 725.0 L2022.0 722.0Z" fill="#ffffff"/><path d="M2129.6 676.0 L2143.0 678.0 L2140.0 685.0 L2130.0 684.0Z" fill="#ffffff"/><path d="M2059.6 718.0 L2068.0 716.0 L2071.0 725.0 L2062.0 726.0Z" fill="#ffffff"/><path d="M1971.7 800.0 L1982.3 835.4 L1978.7 856.6 L1982.3 874.3 L1968.0 902.5" fill="none" stroke="#a9a9a9" stroke-width="1.3" stroke-linejoin="round"/><path d="M1933.7 800.0 L1966.0 802.0 L1978.0 811.0 L1995.0 811.0" fill="none" stroke="#a9a9a9" stroke-width="1.3" stroke-linejoin="round"/><path d="M1978.7 856.6 L1993.0 849.5 L2028.0 853.0 L2056.5 856.6 L2060.0 846.0 L2088.4 842.4 L2099.0 860.0 L2113.0 874.3 L2134.0 881.3 L2162.6 892.0 L2166.0 899.0 L2160.0 920.0 L2150.0 928.0 L2158.0 934.0" fill="none" stroke="#a9a9a9" stroke-width="1.3" stroke-linejoin="round"/><path d="M2060.0 846.0 L2070.7 831.8 L2067.0 817.7 L2081.3 821.2 L2074.0 800.0 L2064.0 790.0 L2052.0 775.0 L2030.0 770.0 L2029.0 743.0 L2021.0 737.0" fill="none" stroke="#a9a9a9" stroke-width="1.3" stroke-linejoin="round"/><path d="M1987.5 730.5 L1996.0 727.7 L2013.0 739.0 L2021.4 737.6 L2024.0 733.0 L2021.0 712.0 L2030.0 697.0" fill="none" stroke="#a9a9a9" stroke-width="1.3" stroke-linejoin="round"/><path d="M1949.0 769.0 L1959.0 763.0 L1992.0 763.0 L2013.0 777.0 L2031.0 768.0" fill="none" stroke="#a9a9a9" stroke-width="1.3" stroke-linejoin="round"/><path d="M2013.0 777.0 L2010.0 787.0 L2003.0 793.0 L2000.0 806.0 L1987.0 811.0 L1978.0 811.0" fill="none" stroke="#a9a9a9" stroke-width="1.3" stroke-linejoin="round"/><path d="M1948.0 785.0 L1968.0 791.0 L1969.0 803.0 L1978.0 811.0" fill="none" stroke="#a9a9a9" stroke-width="1.3" stroke-linejoin="round"/><path d="M1851.4 879.6 L1879.7 874.3 L1901.0 881.3 L1922.0 895.5 L1940.0 895.5 L1964.6 899.0 L1968.0 902.5" fill="none" stroke="#a9a9a9" stroke-width="1.3" stroke-linejoin="round"/><path d="M1902.7 913.0 L1922.0 920.0 L1943.4 909.6 L1964.6 916.7 L1971.7 920.0 L1998.0 918.0 L2015.0 913.0 L2028.0 918.0 L2037.0 935.0 L2036.0 950.0 L2046.0 950.0" fill="none" stroke="#a9a9a9" stroke-width="1.3" stroke-linejoin="round"/><path d="M2015.0 913.0 L2022.0 925.0 L2030.0 940.0 L2028.0 955.0 L2038.0 958.0" fill="none" stroke="#a9a9a9" stroke-width="1.3" stroke-linejoin="round"/><path d="M1893.7 942.8 L1905.0 950.0 L1922.0 954.0 L1939.0 950.0 L1948.0 947.0 L1953.0 940.0 L1968.0 930.0 L1971.7 920.0" fill="none" stroke="#a9a9a9" stroke-width="1.3" stroke-linejoin="round"/><path d="M1862.6 959.8 L1882.4 961.2 L1888.0 952.7 L1893.7 942.8" fill="none" stroke="#a9a9a9" stroke-width="1.3" stroke-linejoin="round"/><path d="M1888.0 965.5 L1891.0 975.0 L1902.0 994.0 L1919.0 1008.0" fill="none" stroke="#a9a9a9" stroke-width="1.3" stroke-linejoin="round"/><path d="M1888.0 965.5 L1904.0 965.5 L1922.0 968.0 L1928.0 973.0 L1930.0 988.0 L1924.0 994.0 L1919.0 1008.0" fill="none" stroke="#a9a9a9" stroke-width="1.3" stroke-linejoin="round"/><path d="M1925.0 953.0 L1927.0 973.0" fill="none" stroke="#a9a9a9" stroke-width="1.3" stroke-linejoin="round"/><path d="M1948.0 947.0 L1963.0 967.0 L1970.0 975.0 L1965.0 986.0 L1970.0 990.0 L1964.0 1008.0 L1967.0 1022.0 L1970.0 1025.0" fill="none" stroke="#a9a9a9" stroke-width="1.3" stroke-linejoin="round"/><path d="M1924.0 994.0 L1938.0 1004.0 L1944.0 997.0 L1956.0 1006.0 L1953.0 1012.0 L1944.0 1015.0 L1943.0 1025.0 L1948.0 1034.0" fill="none" stroke="#a9a9a9" stroke-width="1.3" stroke-linejoin="round"/><path d="M1930.5 1010.0 L1942.0 1013.0 L1944.0 1033.0 L1949.0 1033.0 L1939.0 1051.0" fill="none" stroke="#a9a9a9" stroke-width="1.3" stroke-linejoin="round"/><path d="M1944.0 1015.0 L1964.0 1011.0 L1970.0 1019.0 L1967.0 1030.0 L1948.0 1034.0" fill="none" stroke="#a9a9a9" stroke-width="1.3" stroke-linejoin="round"/><path d="M1970.0 1025.0 L1988.0 1022.0 L2007.0 1025.0 L2013.0 1019.0 L2028.0 1016.0" fill="none" stroke="#a9a9a9" stroke-width="1.3" stroke-linejoin="round"/><path d="M2007.0 1025.0 L2007.0 1035.0" fill="none" stroke="#a9a9a9" stroke-width="1.3" stroke-linejoin="round"/><path d="M1970.0 990.0 L1995.0 990.0 L2015.0 983.0 L2034.0 988.0" fill="none" stroke="#a9a9a9" stroke-width="1.3" stroke-linejoin="round"/><path d="M2117.2 1092.8 L2124.0 1095.6 L2140.0 1093.0 L2160.0 1090.0 L2183.0 1084.0 L2209.0 1083.0" fill="none" stroke="#a9a9a9" stroke-width="1.3" stroke-linejoin="round"/><path d="M2124.0 1095.6 L2120.0 1105.0" fill="none" stroke="#a9a9a9" stroke-width="1.3" stroke-linejoin="round"/><path d="M2183.0 1084.0 L2183.0 1100.0 L2177.0 1130.0 L2152.0 1148.0 L2135.0 1157.0 L2120.0 1158.0" fill="none" stroke="#a9a9a9" stroke-width="1.3" stroke-linejoin="round"/><path d="M2152.0 1148.0 L2155.0 1165.0 L2209.0 1190.0" fill="none" stroke="#a9a9a9" stroke-width="1.3" stroke-linejoin="round"/><path d="M2120.0 1158.0 L2122.0 1172.0 L2135.0 1182.0 L2117.0 1194.0" fill="none" stroke="#a9a9a9" stroke-width="1.3" stroke-linejoin="round"/><path d="M2135.0 1172.0 L2155.0 1162.0" fill="none" stroke="#a9a9a9" stroke-width="1.3" stroke-linejoin="round"/><path d="M2162.0 1090.0 L2160.0 1100.0 L2175.0 1108.0 L2209.0 1100.0" fill="none" stroke="#a9a9a9" stroke-width="1.3" stroke-linejoin="round"/><path d="M2160.0 993.0 L2190.0 1005.0 L2209.0 1010.0" fill="none" stroke="#a9a9a9" stroke-width="1.3" stroke-linejoin="round"/><path d="M2170.0 1022.0 L2195.0 1030.0 L2209.0 1045.0" fill="none" stroke="#a9a9a9" stroke-width="1.3" stroke-linejoin="round"/><path d="M1995.6 1164.0 L1994.0 1190.0 L1997.0 1284.0" fill="none" stroke="#a9a9a9" stroke-width="1.3" stroke-linejoin="round"/><path d="M1805.5 1090.0 L1803.7 1111.0 L1795.0 1133.0 L1816.0 1182.0 L1820.0 1225.0 L1826.0 1256.0 L1846.0 1267.0 L1869.0 1277.0 L1892.0 1271.0 L1922.0 1284.0" fill="none" stroke="#a9a9a9" stroke-width="1.3" stroke-linejoin="round"/><path d="M1840.8 1143.0 L1838.0 1160.0 L1816.0 1182.0" fill="none" stroke="#a9a9a9" stroke-width="1.3" stroke-linejoin="round"/><path d="M1846.0 1267.0 L1822.0 1284.0" fill="none" stroke="#a9a9a9" stroke-width="1.3" stroke-linejoin="round"/><path d="M1880.0 1274.0 L1881.0 1284.0" fill="none" stroke="#a9a9a9" stroke-width="1.3" stroke-linejoin="round"/><path d="M1683.8 1116.5 L1690.7 1125.3 L1698.0 1150.0 L1669.7 1160.7 L1666.0 1175.0 L1648.5 1189.0 L1630.8 1192.5 L1611.3 1201.4 L1611.3 1236.7 L1572.4 1236.7 L1572.4 1268.5 L1560.0 1274.0 L1560.0 1284.0" fill="none" stroke="#a9a9a9" stroke-width="1.3" stroke-linejoin="round"/><path d="M1611.3 1221.0 L1703.0 1284.0" fill="none" stroke="#a9a9a9" stroke-width="1.3" stroke-linejoin="round"/><path d="M1634.4 1249.0 L1652.0 1249.0" fill="none" stroke="#a9a9a9" stroke-width="1.3" stroke-linejoin="round"/><path d="M1634.4 1249.0 L1638.0 1284.0" fill="none" stroke="#a9a9a9" stroke-width="1.3" stroke-linejoin="round"/><path d="M1558.3 1215.5 L1611.3 1215.5" fill="none" stroke="#a9a9a9" stroke-width="1.3" stroke-linejoin="round" stroke-dasharray="3 2.5"/><path d="M1604.0 999.8 L1620.0 989.0 L1645.0 991.0 L1687.0 992.7 L1694.5 984.0 L1720.0 993.0 L1745.4 1001.6 L1745.4 1019.0 L1720.6 1037.0 L1710.0 1047.5 L1708.6 1068.7 L1698.0 1090.0 L1669.7 1097.0 L1648.5 1104.0 L1627.0 1090.0 L1607.8 1088.0 L1609.6 1079.0 L1600.7 1063.4 L1611.5 1040.5 L1609.6 1012.0Z" fill="#a3d6ca" stroke="#6a6a6a" stroke-width="2.6" stroke-linejoin="round"/><path d="M1687.8 890.5 L1695.0 895.8 L1710.8 892.2 L1726.7 880.0 L1733.8 865.7 L1738.4 865.2 L1755.0 878.0 L1766.0 885.4 L1775.1 891.0 L1786.2 896.5 L1800.9 902.0 L1797.2 905.7 L1795.4 920.4 L1788.0 929.6 L1778.8 944.3 L1780.7 949.8 L1791.0 962.0 L1788.0 975.0 L1790.0 984.0 L1777.0 987.4 L1756.0 992.7 L1745.4 1001.6 L1720.0 993.0 L1694.5 984.0 L1694.5 955.6 L1689.0 927.0 L1680.0 916.7 L1655.5 913.0 L1653.8 906.0 L1670.0 902.5 L1687.4 899.0Z" fill="#a3d6ca" stroke="#6a6a6a" stroke-width="2.6" stroke-linejoin="round"/><path d="M1778.8 944.3 L1793.5 951.6 L1804.6 948.0 L1810.0 953.5 L1821.0 946.0 L1823.0 938.8 L1837.6 937.0 L1848.7 935.0 L1867.0 946.0 L1862.6 945.7 L1864.0 952.7 L1866.2 958.4 L1857.0 959.8 L1850.0 965.5 L1850.0 976.8 L1853.4 978.2 L1851.3 985.3 L1865.5 995.2 L1871.0 1006.5 L1878.2 1013.5 L1892.3 1017.8 L1891.0 1023.5 L1906.5 1032.0 L1916.4 1039.0 L1919.2 1047.5 L1915.0 1047.5 L1906.5 1039.0 L1902.2 1040.4 L1896.6 1050.3 L1903.6 1054.6 L1903.6 1063.0 L1896.6 1070.0 L1888.0 1075.8 L1886.7 1067.3 L1892.3 1063.0 L1889.5 1051.7 L1879.6 1039.0 L1868.3 1033.4 L1859.8 1026.3 L1851.3 1019.2 L1840.0 1010.7 L1826.7 994.5 L1816.0 980.0 L1805.5 984.0 L1790.0 984.0 L1788.0 975.0 L1791.0 962.0 L1780.7 949.8Z" fill="#a3d6ca" stroke="#6a6a6a" stroke-width="2.6" stroke-linejoin="round"/><path d="M1851.3 1074.4 L1861.2 1073.0 L1874.0 1074.4 L1886.7 1072.2 L1882.4 1088.5 L1881.0 1094.2 L1868.3 1090.0 L1854.0 1081.4Z" fill="#a3d6ca" stroke="#6a6a6a" stroke-width="2.6" stroke-linejoin="round"/><path d="M1803.7 1030.0 L1816.0 1026.0 L1819.6 1058.0 L1805.5 1061.7 L1806.0 1045.0Z" fill="#a3d6ca" stroke="#6a6a6a" stroke-width="2.6" stroke-linejoin="round"/><path d="M1809.0 1005.0 L1816.0 1001.6 L1816.0 1022.8 L1809.0 1021.0Z" fill="#a3d6ca" stroke="#6a6a6a" stroke-width="2.6" stroke-linejoin="round"/><path d="M1736.5 1051.0 L1749.0 1047.5 L1745.0 1054.6 L1738.0 1055.0Z" fill="#a3d6ca" stroke="#6a6a6a" stroke-width="2.6" stroke-linejoin="round"/><path d="M1753.0 1046.0 L1757.0 1045.0 L1756.0 1048.0Z" fill="#a3d6ca" stroke="#6a6a6a" stroke-width="2.6" stroke-linejoin="round"/><path d="M1604.0 999.8 L1620.0 989.0 L1645.0 991.0 L1687.0 992.7 L1694.5 984.0 L1720.0 993.0 L1745.4 1001.6 L1745.4 1019.0 L1720.6 1037.0 L1710.0 1047.5 L1708.6 1068.7 L1698.0 1090.0 L1669.7 1097.0 L1648.5 1104.0 L1627.0 1090.0 L1607.8 1088.0 L1609.6 1079.0 L1600.7 1063.4 L1611.5 1040.5 L1609.6 1012.0Z" fill="#a3d6ca"/><path d="M1687.8 890.5 L1695.0 895.8 L1710.8 892.2 L1726.7 880.0 L1733.8 865.7 L1738.4 865.2 L1755.0 878.0 L1766.0 885.4 L1775.1 891.0 L1786.2 896.5 L1800.9 902.0 L1797.2 905.7 L1795.4 920.4 L1788.0 929.6 L1778.8 944.3 L1780.7 949.8 L1791.0 962.0 L1788.0 975.0 L1790.0 984.0 L1777.0 987.4 L1756.0 992.7 L1745.4 1001.6 L1720.0 993.0 L1694.5 984.0 L1694.5 955.6 L1689.0 927.0 L1680.0 916.7 L1655.5 913.0 L1653.8 906.0 L1670.0 902.5 L1687.4 899.0Z" fill="#a3d6ca"/><path d="M1778.8 944.3 L1793.5 951.6 L1804.6 948.0 L1810.0 953.5 L1821.0 946.0 L1823.0 938.8 L1837.6 937.0 L1848.7 935.0 L1867.0 946.0 L1862.6 945.7 L1864.0 952.7 L1866.2 958.4 L1857.0 959.8 L1850.0 965.5 L1850.0 976.8 L1853.4 978.2 L1851.3 985.3 L1865.5 995.2 L1871.0 1006.5 L1878.2 1013.5 L1892.3 1017.8 L1891.0 1023.5 L1906.5 1032.0 L1916.4 1039.0 L1919.2 1047.5 L1915.0 1047.5 L1906.5 1039.0 L1902.2 1040.4 L1896.6 1050.3 L1903.6 1054.6 L1903.6 1063.0 L1896.6 1070.0 L1888.0 1075.8 L1886.7 1067.3 L1892.3 1063.0 L1889.5 1051.7 L1879.6 1039.0 L1868.3 1033.4 L1859.8 1026.3 L1851.3 1019.2 L1840.0 1010.7 L1826.7 994.5 L1816.0 980.0 L1805.5 984.0 L1790.0 984.0 L1788.0 975.0 L1791.0 962.0 L1780.7 949.8Z" fill="#a3d6ca"/><path d="M1851.3 1074.4 L1861.2 1073.0 L1874.0 1074.4 L1886.7 1072.2 L1882.4 1088.5 L1881.0 1094.2 L1868.3 1090.0 L1854.0 1081.4Z" fill="#a3d6ca"/><path d="M1803.7 1030.0 L1816.0 1026.0 L1819.6 1058.0 L1805.5 1061.7 L1806.0 1045.0Z" fill="#a3d6ca"/><path d="M1809.0 1005.0 L1816.0 1001.6 L1816.0 1022.8 L1809.0 1021.0Z" fill="#a3d6ca"/><path d="M1736.5 1051.0 L1749.0 1047.5 L1745.0 1054.6 L1738.0 1055.0Z" fill="#a3d6ca"/><path d="M1753.0 1046.0 L1757.0 1045.0 L1756.0 1048.0Z" fill="#a3d6ca"/><path d="M1504.0 1201.0 L1507.0 1200.5 L1508.0 1204.0 L1506.0 1206.0Z" fill="#a3d6ca" stroke="#6a6a6a" stroke-width="1.2" stroke-linejoin="round"/><path d="M1502.0 1214.0 L1506.0 1213.0 L1504.0 1216.0Z" fill="#a3d6ca" stroke="#6a6a6a" stroke-width="1.2" stroke-linejoin="round"/><path d="M1516.6 1207.0 L1525.5 1203.5 L1521.0 1211.4Z" fill="#a3d6ca" stroke="#6a6a6a" stroke-width="1.2" stroke-linejoin="round"/><path d="M1544.4 1210.4 L1550.0 1203.0 L1552.0 1198.0 L1556.2 1194.6 L1556.0 1198.0 L1552.0 1202.0 L1551.0 1207.0Z" fill="#a3d6ca" stroke="#6a6a6a" stroke-width="1.2" stroke-linejoin="round"/><ellipse cx="1354" cy="1053" rx="2.2" ry="1.3399999999999999" fill="#a3d6ca" stroke="#6a6a6a" stroke-width="1.2"/><ellipse cx="1381" cy="1066" rx="3.5" ry="2.25" fill="#a3d6ca" stroke="#6a6a6a" stroke-width="1.2"/><ellipse cx="1388" cy="1064" rx="2.5" ry="1.5499999999999998" fill="#a3d6ca" stroke="#6a6a6a" stroke-width="1.2"/><ellipse cx="1400" cy="1064" rx="3" ry="1.9" fill="#a3d6ca" stroke="#6a6a6a" stroke-width="1.2"/><ellipse cx="1419" cy="1078" rx="3.2" ry="2.04" fill="#a3d6ca" stroke="#6a6a6a" stroke-width="1.2"/><ellipse cx="1423" cy="1090" rx="2.2" ry="1.3399999999999999" fill="#a3d6ca" stroke="#6a6a6a" stroke-width="1.2"/><ellipse cx="1516" cy="1148" rx="3.5" ry="2.25" fill="#a3d6ca" stroke="#6a6a6a" stroke-width="1.2"/><ellipse cx="1523" cy="1144" rx="1.8" ry="1.06" fill="#a3d6ca" stroke="#6a6a6a" stroke-width="1.2"/><ellipse cx="1513.2" cy="1209.9" rx="2.3" ry="1.41" fill="#a3d6ca" stroke="#6a6a6a" stroke-width="1.2"/><ellipse cx="1531.5" cy="1212" rx="3.4" ry="2.1799999999999997" fill="#a3d6ca" stroke="#6a6a6a" stroke-width="1.2"/><path d="M1694.5 984.0 L1720.0 993.0 L1745.4 1001.6" fill="none" stroke="#86bdb0" stroke-width="1.3" stroke-linejoin="round"/><path d="M1616.0 1012.0 L1638.0 1020.0 L1631.0 1035.0 L1628.0 1070.0 L1626.0 1088.0" fill="none" stroke="#86bdb0" stroke-width="1.3" stroke-linejoin="round"/><path d="M1780.7 949.8 L1791.0 962.0 L1788.0 975.0 L1790.0 984.0" fill="none" stroke="#86bdb0" stroke-width="1.3" stroke-linejoin="round"/><path d="M1624.2 784.4 L1638.3 786.0 L1645.4 796.7 L1645.4 803.8 L1638.3 812.7 L1640.0 826.8 L1636.6 842.7 L1615.4 851.6 L1597.7 857.7 L1590.6 844.5 L1603.0 828.6 L1594.0 819.7 L1594.0 805.6 L1610.0 802.0 L1611.8 791.4Z" fill="#5cb5c8" stroke="#6a6a6a" stroke-width="2.6" stroke-linejoin="round"/><path d="M1652.5 716.3 L1673.7 715.4 L1672.0 724.3 L1661.3 736.6 L1686.0 735.7 L1687.9 742.0 L1679.0 761.4 L1668.4 770.2 L1682.5 772.0 L1691.4 784.4 L1695.0 798.5 L1703.8 805.6 L1710.8 819.7 L1710.8 830.3 L1721.4 830.3 L1728.5 837.4 L1726.7 849.8 L1721.4 855.0 L1725.0 862.2 L1714.4 869.2 L1693.0 871.0 L1679.0 874.5 L1666.6 878.0 L1647.0 883.4 L1645.4 879.8 L1657.8 865.7 L1675.5 856.9 L1668.4 853.3 L1650.7 851.6 L1654.3 844.5 L1665.0 837.4 L1656.0 832.0 L1659.6 823.3 L1672.0 819.7 L1673.7 809.1 L1670.2 796.7 L1663.0 795.0 L1652.5 796.7 L1650.7 788.0 L1656.0 777.3 L1647.2 784.4 L1636.6 777.3 L1640.0 765.0 L1633.0 752.5 L1633.0 738.4 L1643.6 731.3Z" fill="#5cb5c8" stroke="#6a6a6a" stroke-width="2.6" stroke-linejoin="round"/><path d="M1638.3 719.0 L1639.0 724.0 L1628.0 738.0 L1625.0 754.0 L1622.0 752.0 L1624.0 738.0 L1630.0 727.0Z" fill="#5cb5c8" stroke="#6a6a6a" stroke-width="2.6" stroke-linejoin="round"/><path d="M1670.0 701.0 L1682.0 699.5 L1681.0 712.0 L1672.0 711.0Z" fill="#5cb5c8" stroke="#6a6a6a" stroke-width="2.6" stroke-linejoin="round"/><path d="M1697.0 666.0 L1700.0 668.0 L1694.0 687.0 L1690.0 680.0 L1692.0 672.0Z" fill="#5cb5c8" stroke="#6a6a6a" stroke-width="2.6" stroke-linejoin="round"/><path d="M1738.4 865.2 L1749.4 856.0 L1755.0 848.7 L1762.3 830.3 L1767.8 823.0 L1784.3 820.2 L1789.9 823.0 L1789.9 817.4 L1800.9 815.6 L1806.4 813.8 L1819.3 819.3 L1810.0 808.2 L1808.2 795.4 L1819.3 793.5 L1823.0 797.2 L1830.3 806.4 L1837.6 810.0 L1848.7 802.7 L1859.7 799.0 L1867.0 808.2 L1872.6 815.6 L1870.7 830.3 L1876.3 845.0 L1878.0 863.4 L1872.6 867.0 L1848.7 880.0 L1850.5 885.4 L1867.0 905.7 L1878.0 907.5 L1881.8 902.0 L1900.0 907.5 L1903.8 920.4 L1896.5 931.4 L1892.8 940.6 L1876.3 946.0 L1867.0 946.0 L1848.7 935.0 L1837.6 937.0 L1823.0 938.8 L1821.0 946.0 L1810.0 953.5 L1804.6 948.0 L1793.5 951.6 L1780.7 949.8 L1778.8 944.3 L1788.0 929.6 L1795.4 920.4 L1797.2 905.7 L1800.9 902.0 L1786.2 896.5 L1775.1 891.0 L1766.0 885.4 L1755.0 878.0Z" fill="#5cb5c8" stroke="#6a6a6a" stroke-width="2.6" stroke-linejoin="round"/><path d="M1624.2 784.4 L1638.3 786.0 L1645.4 796.7 L1645.4 803.8 L1638.3 812.7 L1640.0 826.8 L1636.6 842.7 L1615.4 851.6 L1597.7 857.7 L1590.6 844.5 L1603.0 828.6 L1594.0 819.7 L1594.0 805.6 L1610.0 802.0 L1611.8 791.4Z" fill="#5cb5c8"/><path d="M1652.5 716.3 L1673.7 715.4 L1672.0 724.3 L1661.3 736.6 L1686.0 735.7 L1687.9 742.0 L1679.0 761.4 L1668.4 770.2 L1682.5 772.0 L1691.4 784.4 L1695.0 798.5 L1703.8 805.6 L1710.8 819.7 L1710.8 830.3 L1721.4 830.3 L1728.5 837.4 L1726.7 849.8 L1721.4 855.0 L1725.0 862.2 L1714.4 869.2 L1693.0 871.0 L1679.0 874.5 L1666.6 878.0 L1647.0 883.4 L1645.4 879.8 L1657.8 865.7 L1675.5 856.9 L1668.4 853.3 L1650.7 851.6 L1654.3 844.5 L1665.0 837.4 L1656.0 832.0 L1659.6 823.3 L1672.0 819.7 L1673.7 809.1 L1670.2 796.7 L1663.0 795.0 L1652.5 796.7 L1650.7 788.0 L1656.0 777.3 L1647.2 784.4 L1636.6 777.3 L1640.0 765.0 L1633.0 752.5 L1633.0 738.4 L1643.6 731.3Z" fill="#5cb5c8"/><path d="M1638.3 719.0 L1639.0 724.0 L1628.0 738.0 L1625.0 754.0 L1622.0 752.0 L1624.0 738.0 L1630.0 727.0Z" fill="#5cb5c8"/><path d="M1670.0 701.0 L1682.0 699.5 L1681.0 712.0 L1672.0 711.0Z" fill="#5cb5c8"/><path d="M1697.0 666.0 L1700.0 668.0 L1694.0 687.0 L1690.0 680.0 L1692.0 672.0Z" fill="#5cb5c8"/><path d="M1738.4 865.2 L1749.4 856.0 L1755.0 848.7 L1762.3 830.3 L1767.8 823.0 L1784.3 820.2 L1789.9 823.0 L1789.9 817.4 L1800.9 815.6 L1806.4 813.8 L1819.3 819.3 L1810.0 808.2 L1808.2 795.4 L1819.3 793.5 L1823.0 797.2 L1830.3 806.4 L1837.6 810.0 L1848.7 802.7 L1859.7 799.0 L1867.0 808.2 L1872.6 815.6 L1870.7 830.3 L1876.3 845.0 L1878.0 863.4 L1872.6 867.0 L1848.7 880.0 L1850.5 885.4 L1867.0 905.7 L1878.0 907.5 L1881.8 902.0 L1900.0 907.5 L1903.8 920.4 L1896.5 931.4 L1892.8 940.6 L1876.3 946.0 L1867.0 946.0 L1848.7 935.0 L1837.6 937.0 L1823.0 938.8 L1821.0 946.0 L1810.0 953.5 L1804.6 948.0 L1793.5 951.6 L1780.7 949.8 L1778.8 944.3 L1788.0 929.6 L1795.4 920.4 L1797.2 905.7 L1800.9 902.0 L1786.2 896.5 L1775.1 891.0 L1766.0 885.4 L1755.0 878.0Z" fill="#5cb5c8"/><path d="M1789.9 823.0 L1786.0 843.0 L1779.0 848.0 L1775.0 867.0 L1781.0 882.0" fill="none" stroke="#4fa2b5" stroke-width="1.2" stroke-linejoin="round"/><path d="M1749.4 856.0 L1762.0 857.0 L1775.0 860.0" fill="none" stroke="#4fa2b5" stroke-width="1.2" stroke-linejoin="round"/><path d="M1804.6 924.0 L1823.0 926.0 L1848.7 924.0 L1856.0 928.0" fill="none" stroke="#4fa2b5" stroke-width="1.2" stroke-linejoin="round"/><path d="M1856.0 928.0 L1856.0 915.0 L1865.0 909.0 L1878.0 907.5" fill="none" stroke="#4fa2b5" stroke-width="1.2" stroke-linejoin="round"/><path d="M1624.0 802.0 L1632.0 808.0 L1640.0 800.0" fill="none" stroke="#4fa2b5" stroke-width="1.1" stroke-linejoin="round"/><path d="M1771.9 713.7 L1766.6 653.6 L1766.6 632.4 L1770.0 632.0 L1789.0 615.0 L1809.6 598.0 L1824.0 585.0 L1838.0 564.0 L1849.0 544.0 L1857.9 519.6 L1863.6 507.0 L1872.6 495.8 L1877.2 482.2 L1887.3 473.2 L1862.4 472.0 L1864.7 465.3 L1874.9 461.9 L1873.8 450.5 L1881.7 443.7 L1893.0 434.7 L1887.3 450.5 L1899.8 443.7 L1903.2 431.3 L1910.0 426.8 L1917.9 418.9 L1924.7 409.8 L1932.6 412.0 L1940.5 413.2 L1944.0 404.1 L1951.9 403.0 L1958.6 390.6 L1974.5 383.8 L1979.0 387.2 L1990.3 378.1 L2000.5 372.4 L2007.3 377.0 L1997.0 397.3 L1993.7 408.7 L2013.0 380.4 L2011.8 398.5 L2019.8 380.4 L2023.2 373.6 L2032.2 378.1 L2031.0 396.2 L2037.9 382.6 L2048.0 388.3 L2061.6 398.5 L2058.2 407.5 L2035.6 407.5 L2045.8 414.3 L2047.0 421.0 L2053.7 416.6 L2060.5 421.0 L2060.5 425.6 L2047.0 432.4 L2039.0 446.0 L2033.3 448.3 L2033.3 461.9 L2050.3 485.6 L2040.0 507.0 L2044.7 520.0 L2052.6 540.4 L2048.0 554.0 L2052.6 567.5 L2057.0 585.6 L2052.6 592.4 L2068.5 615.0 L2057.0 637.7 L2030.0 667.0 L2021.0 674.8 L2000.0 678.0 L1971.7 687.0 L1954.0 682.0 L1952.0 668.0 L1951.0 634.5 L1951.0 609.6 L1962.4 606.0 L1979.4 589.0 L1998.6 561.0 L1996.3 548.5 L1985.0 539.4 L1964.7 538.0 L1953.3 553.0 L1951.0 566.6 L1953.3 575.6 L1945.4 589.2 L1930.7 600.5 L1917.0 614.0 L1907.0 626.6 L1904.7 645.8 L1907.0 668.4 L1925.7 689.0 L1918.6 699.6 L1897.4 717.0 L1898.3 720.0 L1896.5 747.6 L1892.8 762.3 L1878.0 766.0 L1872.6 778.8 L1865.2 780.7 L1859.7 766.0 L1854.2 756.8 L1846.8 727.4 L1840.8 724.0 L1830.0 689.0 L1816.0 710.0 L1791.3 727.9Z" fill="#2a91a2" stroke="#6a6a6a" stroke-width="2.6" stroke-linejoin="round"/><path d="M1804.6 793.5 L1800.9 782.5 L1800.9 760.4 L1804.6 749.4 L1815.6 744.0 L1828.5 736.5 L1828.5 756.8 L1832.0 762.3 L1824.8 771.5 L1819.3 780.7 L1817.4 791.7Z" fill="#2a91a2" stroke="#6a6a6a" stroke-width="2.6" stroke-linejoin="round"/><path d="M1834.0 773.3 L1848.7 769.6 L1852.4 782.5 L1845.0 791.7 L1835.8 789.9Z" fill="#2a91a2" stroke="#6a6a6a" stroke-width="2.6" stroke-linejoin="round"/><path d="M1821.0 780.7 L1830.3 778.8 L1832.0 788.0 L1823.0 789.9Z" fill="#2a91a2" stroke="#6a6a6a" stroke-width="2.6" stroke-linejoin="round"/><path d="M1835.8 793.5 L1846.8 793.0 L1846.0 797.2 L1836.0 797.2Z" fill="#2a91a2" stroke="#6a6a6a" stroke-width="2.6" stroke-linejoin="round"/><path d="M1918.6 731.0 L1929.0 728.0 L1926.0 740.0 L1921.0 745.5Z" fill="#2a91a2" stroke="#6a6a6a" stroke-width="2.6" stroke-linejoin="round"/><path d="M1899.0 740.0 L1903.0 735.0 L1896.0 758.0 L1894.0 757.0Z" fill="#2a91a2" stroke="#6a6a6a" stroke-width="2.6" stroke-linejoin="round"/><path d="M1932.0 689.0 L1940.0 687.0 L1941.0 695.0 L1933.0 695.0Z" fill="#2a91a2" stroke="#6a6a6a" stroke-width="2.6" stroke-linejoin="round"/><path d="M1771.9 713.7 L1766.6 653.6 L1766.6 632.4 L1770.0 632.0 L1789.0 615.0 L1809.6 598.0 L1824.0 585.0 L1838.0 564.0 L1849.0 544.0 L1857.9 519.6 L1863.6 507.0 L1872.6 495.8 L1877.2 482.2 L1887.3 473.2 L1862.4 472.0 L1864.7 465.3 L1874.9 461.9 L1873.8 450.5 L1881.7 443.7 L1893.0 434.7 L1887.3 450.5 L1899.8 443.7 L1903.2 431.3 L1910.0 426.8 L1917.9 418.9 L1924.7 409.8 L1932.6 412.0 L1940.5 413.2 L1944.0 404.1 L1951.9 403.0 L1958.6 390.6 L1974.5 383.8 L1979.0 387.2 L1990.3 378.1 L2000.5 372.4 L2007.3 377.0 L1997.0 397.3 L1993.7 408.7 L2013.0 380.4 L2011.8 398.5 L2019.8 380.4 L2023.2 373.6 L2032.2 378.1 L2031.0 396.2 L2037.9 382.6 L2048.0 388.3 L2061.6 398.5 L2058.2 407.5 L2035.6 407.5 L2045.8 414.3 L2047.0 421.0 L2053.7 416.6 L2060.5 421.0 L2060.5 425.6 L2047.0 432.4 L2039.0 446.0 L2033.3 448.3 L2033.3 461.9 L2050.3 485.6 L2040.0 507.0 L2044.7 520.0 L2052.6 540.4 L2048.0 554.0 L2052.6 567.5 L2057.0 585.6 L2052.6 592.4 L2068.5 615.0 L2057.0 637.7 L2030.0 667.0 L2021.0 674.8 L2000.0 678.0 L1971.7 687.0 L1954.0 682.0 L1952.0 668.0 L1951.0 634.5 L1951.0 609.6 L1962.4 606.0 L1979.4 589.0 L1998.6 561.0 L1996.3 548.5 L1985.0 539.4 L1964.7 538.0 L1953.3 553.0 L1951.0 566.6 L1953.3 575.6 L1945.4 589.2 L1930.7 600.5 L1917.0 614.0 L1907.0 626.6 L1904.7 645.8 L1907.0 668.4 L1925.7 689.0 L1918.6 699.6 L1897.4 717.0 L1898.3 720.0 L1896.5 747.6 L1892.8 762.3 L1878.0 766.0 L1872.6 778.8 L1865.2 780.7 L1859.7 766.0 L1854.2 756.8 L1846.8 727.4 L1840.8 724.0 L1830.0 689.0 L1816.0 710.0 L1791.3 727.9Z" fill="#2a91a2"/><path d="M1804.6 793.5 L1800.9 782.5 L1800.9 760.4 L1804.6 749.4 L1815.6 744.0 L1828.5 736.5 L1828.5 756.8 L1832.0 762.3 L1824.8 771.5 L1819.3 780.7 L1817.4 791.7Z" fill="#2a91a2"/><path d="M1834.0 773.3 L1848.7 769.6 L1852.4 782.5 L1845.0 791.7 L1835.8 789.9Z" fill="#2a91a2"/><path d="M1821.0 780.7 L1830.3 778.8 L1832.0 788.0 L1823.0 789.9Z" fill="#2a91a2"/><path d="M1835.8 793.5 L1846.8 793.0 L1846.0 797.2 L1836.0 797.2Z" fill="#2a91a2"/><path d="M1918.6 731.0 L1929.0 728.0 L1926.0 740.0 L1921.0 745.5Z" fill="#2a91a2"/><path d="M1899.0 740.0 L1903.0 735.0 L1896.0 758.0 L1894.0 757.0Z" fill="#2a91a2"/><path d="M1932.0 689.0 L1940.0 687.0 L1941.0 695.0 L1933.0 695.0Z" fill="#2a91a2"/><path d="M1951.9 434.7 L1945.0 441.5 L1940.5 443.7 L1936.0 463.0 L1916.8 458.5 L1913.4 474.3 L1906.6 473.2 L1898.7 478.8 L1895.3 490.0 L1887.7 510.0 L1874.0 530.0 L1864.0 572.0 L1869.6 583.6 L1856.0 587.0 L1845.8 606.0 L1849.0 646.0 L1855.0 654.0 L1849.0 670.0 L1841.0 700.0" fill="none" stroke="#22808f" stroke-width="1.2" stroke-linejoin="round"/><path d="M1951.9 434.7 L1961.0 449.4 L1972.2 455.0 L1981.3 450.5 L1991.5 457.3 L2001.7 444.9 L2005.0 420.0 L2026.5 409.8 L2041.3 425.6 L2037.9 441.5" fill="none" stroke="#22808f" stroke-width="1.2" stroke-linejoin="round"/><path d="M1951.9 434.7 L1974.5 473.2 L1977.9 478.8 L1976.8 490.0 L1981.3 520.0 L1982.0 540.0" fill="none" stroke="#22808f" stroke-width="1.2" stroke-linejoin="round"/><path d="M1903.5 521.0 L1908.0 523.0 L1919.4 542.0 L1916.0 544.0 L1908.0 532.0Z" fill="#ffffff" stroke="#6a6a6a" stroke-width="1.1" stroke-linejoin="round"/><path d="M1868.5 605.0 L1872.0 606.0 L1874.0 617.5 L1871.0 616.0Z" fill="#ffffff" stroke="#6a6a6a" stroke-width="1.0" stroke-linejoin="round"/><path d="M1852.0 702.0 L1864.0 700.0 L1866.0 712.0 L1856.0 718.0 L1850.0 712.0Z" fill="#ffffff" stroke="#6a6a6a" stroke-width="1.1" stroke-linejoin="round"/><path d="M1872.0 712.0 L1876.0 710.0 L1873.0 728.0 L1870.0 727.0Z" fill="#ffffff" stroke="#6a6a6a" stroke-width="1.1" stroke-linejoin="round"/><text x="1220.6" y="384.9" font-family="Liberation Sans" font-size="19" letter-spacing="0.41" fill="#6e6e6e" stroke="#ffffff" stroke-width="3" stroke-opacity="0.7" paint-order="stroke">Greenland</text><text x="1903.8" y="847" font-family="Liberation Sans" font-size="19" letter-spacing="0.17" fill="#6e6e6e" stroke="#ffffff" stroke-width="3" stroke-opacity="0.7" paint-order="stroke">Poland</text><text x="1994.6" y="830.5" font-family="Liberation Sans" font-size="19" letter-spacing="0.26" fill="#6e6e6e" stroke="#ffffff" stroke-width="3" stroke-opacity="0.7" paint-order="stroke">Belarus</text><text x="2040.6" y="903.3" font-family="Liberation Sans" font-size="19" letter-spacing="0.59" fill="#6e6e6e" stroke="#ffffff" stroke-width="3" stroke-opacity="0.7" paint-order="stroke">Ukraine</text><text x="2069" y="1066" font-family="Liberation Sans" font-size="19" letter-spacing="0.53" fill="#6e6e6e" stroke="#ffffff" stroke-width="3" stroke-opacity="0.7" paint-order="stroke">Turkey</text><text x="1708" y="1210.9" font-family="Liberation Sans" font-size="19" letter-spacing="0.81" fill="#6e6e6e" stroke="#ffffff" stroke-width="3" stroke-opacity="0.7" paint-order="stroke">Algeria</text><text x="1886.8" y="1228" font-family="Liberation Sans" font-size="19" letter-spacing="0.14" fill="#6e6e6e" stroke="#ffffff" stroke-width="3" stroke-opacity="0.7" paint-order="stroke">Libya</text><text x="2010.6" y="1242" font-family="Liberation Sans" font-size="19" letter-spacing="0.65" fill="#6e6e6e" stroke="#ffffff" stroke-width="3" stroke-opacity="0.7" paint-order="stroke">Egypt</text><text x="2183.8" y="1143.7" font-family="Liberation Sans" font-size="19" letter-spacing="1.91" fill="#6e6e6e" stroke="#ffffff" stroke-width="3" stroke-opacity="0.7" paint-order="stroke">Ira</text><text x="2189.5" y="1256" font-family="Liberation Sans" font-size="19" letter-spacing="-4.74" fill="#6e6e6e" stroke="#ffffff" stroke-width="3" stroke-opacity="0.7" paint-order="stroke">Sa</text><text x="2186" y="1275.6" font-family="Liberation Sans" font-size="19" letter-spacing="2.00" fill="#6e6e6e" stroke="#ffffff" stroke-width="3" stroke-opacity="0.7" paint-order="stroke">Ar</text><text x="1890.3" y="535" font-family="Liberation Sans" font-size="19" letter-spacing="0.07" fill="#227d8c">Sweden</text><text x="1780.7" y="660" font-family="Liberation Sans" font-size="19" letter-spacing="0.92" fill="#227d8c">Norway</text><text x="1975.2" y="627" font-family="Liberation Sans" font-size="19" letter-spacing="0.51" fill="#227d8c">Finland</text><text x="1782.5" y="865.4" font-family="Liberation Sans" font-size="19" letter-spacing="0.23" fill="#4a9fb2">Germany</text><text x="1710" y="946.7" font-family="Liberation Sans" font-size="19" letter-spacing="-0.23" fill="#8cc4b8">France</text><text x="1816" y="985.6" font-family="Liberation Sans" font-size="19" letter-spacing="0.14" fill="#8cc4b8">Italy</text><text x="1646.7" y="1043.3" font-family="Liberation Sans" font-size="19" letter-spacing="0.23" fill="#8cc4b8">Spain</text></g><rect x="1214.5" y="304.5" width="994" height="979" fill="none" stroke="#e3e3e3" stroke-width="1"/><text x="1226" y="1273.8" font-family="Liberation Sans" font-size="17" letter-spacing="-0.56" fill="#555">© OpenStreetMap contributors</text></svg>
<div class="a" style="left:2234px;top:216px;width:308px;height:184px;background:#fff;border:2px solid #d4d4d4"></div>
<div class="a" style="left:2236px;top:218px;width:304px;height:58px;background:#f8f8f8;"></div>
<div class="t" style="left:2249.0px;top:235.8px;font-size:25px;color:#333;transform:scaleX(0.985);transform-origin:0 0;">Country (big regions)</div>
<div class="a" style="left:2243px;top:283px;width:26px;height:26px;background:#2e91a3;border:2px solid #666"></div>
<div class="t" style="left:2281.0px;top:284.5px;font-size:26px;color:#333;transform:scaleX(0.946);transform-origin:0 0;">Scandinavia</div>
<div class="a" style="left:2243px;top:323px;width:26px;height:26px;background:#62b6cb;border:2px solid #666"></div>
<div class="t" style="left:2281.0px;top:324.8px;font-size:26px;color:#333;transform:scaleX(0.989);transform-origin:0 0;">Central &amp; Northwest</div>
<div class="a" style="left:2243px;top:363px;width:26px;height:26px;background:#a9d8cc;border:2px solid #666"></div>
<div class="t" style="left:2281.0px;top:365.1px;font-size:26px;color:#333;transform:scaleX(0.999);transform-origin:0 0;">Mediterranean</div>
<div class="a" style="left:0px;top:1310px;width:2552px;height:60px;background:#e6e6e6;"></div>
<div class="a" style="left:0px;top:1310px;width:2552px;height:2px;background:#d0d0d0;"></div>
<div class="a" style="left:565px;top:1312px;width:299px;height:58px;background:#f4f4f4;"></div>
<div class="a" style="left:254px;top:1312px;width:2px;height:56px;background:#cfcfcf;"></div>
<div class="a" style="left:564px;top:1312px;width:2px;height:56px;background:#cfcfcf;"></div>
<div class="a" style="left:863px;top:1312px;width:2px;height:56px;background:#cfcfcf;"></div>
<div class="a" style="left:1186px;top:1312px;width:2px;height:56px;background:#cfcfcf;"></div>
<div class="a" style="left:1509px;top:1312px;width:2px;height:56px;background:#cfcfcf;"></div>
<div class="a" style="left:1815px;top:1312px;width:2px;height:56px;background:#cfcfcf;"></div>
<div class="a" style="left:2120px;top:1312px;width:2px;height:56px;background:#cfcfcf;"></div>
<div class="a" style="left:2183px;top:1312px;width:2px;height:56px;background:#cfcfcf;"></div>
<div class="a" style="left:2247px;top:1312px;width:2px;height:56px;background:#cfcfcf;"></div>
<div class="a" style="left:2311px;top:1312px;width:2px;height:56px;background:#cfcfcf;"></div>
<div class="a" style="left:0px;top:1369px;width:2552px;height:2px;background:#cfcfcf;"></div>
<div class="a" style="left:0px;top:1371px;width:2552px;height:43px;background:#e6e6e6;"></div>
<svg style="left:13px;top:1329px" width="20" height="26" viewBox="0 0 20 26"><ellipse cx="9" cy="5" rx="7.5" ry="3.8" fill="none" stroke="#666" stroke-width="1.8"/><path d="M1.5 5V19C1.5 22 5 23.5 9 23.5C13 23.5 16.5 22 16.5 19V5" fill="none" stroke="#666" stroke-width="1.8"/></svg>
<div class="t" style="left:42.6px;top:1328.5px;font-size:26px;color:#555;transform:scaleX(0.913);transform-origin:0 0;">Data Source</div>
<div class="t" style="left:268.8px;top:1328.5px;font-size:26px;color:#555;transform:scaleX(0.924);transform-origin:0 0;">EU &amp; non-EU (1st ds)</div>
<div class="t" style="left:578.2px;top:1328.5px;font-size:26px;color:#555;transform:scaleX(0.915);transform-origin:0 0;font-weight:bold;">Big regions (2nd ds)</div>
<div class="t" style="left:876.2px;top:1328.5px;font-size:26px;color:#555;transform:scaleX(0.952);transform-origin:0 0;">Small regions (3rd ds)</div>
<div class="t" style="left:1198.0px;top:1328.5px;font-size:26px;color:#555;transform:scaleX(0.930);transform-origin:0 0;">Profit &amp; Sales Analysis</div>
<svg style="left:1527px;top:1330px" width="24" height="24" viewBox="0 0 24 24"><rect x="1" y="1" width="20" height="20" fill="none" stroke="#666" stroke-width="2"/><path d="M11 1V21M1 11H21" stroke="#666" stroke-width="2"/></svg>
<div class="t" style="left:1558.7px;top:1328.5px;font-size:26px;color:#555;transform:scaleX(0.923);transform-origin:0 0;">Source Dashboard</div>
<svg style="left:1833px;top:1330px" width="24" height="24" viewBox="0 0 24 24"><rect x="1" y="1" width="20" height="20" fill="none" stroke="#666" stroke-width="2"/><path d="M11 1V21M1 11H21" stroke="#666" stroke-width="2"/></svg>
<div class="t" style="left:1864.8px;top:1328.5px;font-size:26px;color:#555;transform:scaleX(0.929);transform-origin:0 0;">Target Dashboard</div>
<svg style="left:2140px;top:1327px" width="32" height="34" viewBox="0 0 32 34"><path d="M14 24H1V1H24V14" fill="none" stroke="#666" stroke-width="2"/><rect x="6" y="12" width="2.2" height="6" fill="#666"/><rect x="11" y="6" width="2.2" height="12" fill="#666"/><rect x="16" y="9" width="2.2" height="9" fill="#666"/><path d="M21 19V33M14 26H28" stroke="#555" stroke-width="3.2"/></svg>
<svg style="left:2204px;top:1327px" width="32" height="34" viewBox="0 0 32 34"><path d="M14 24H1V1H24V14 M12.5 1V24 M1 12.5H24" fill="none" stroke="#666" stroke-width="2"/><path d="M21 19V33M14 26H28" stroke="#555" stroke-width="3.2"/></svg>
<svg style="left:2268px;top:1327px" width="32" height="34" viewBox="0 0 32 34"><path d="M14 24H1V1L8 3L24 1V14 M8 3V24" fill="none" stroke="#666" stroke-width="2"/><path d="M21 19V33M14 26H28" stroke="#555" stroke-width="3.2"/></svg>
<div class="t" style="left:18.4px;top:1381.4px;font-size:22px;color:#222;transform:scaleX(0.933);transform-origin:0 0;">3 marks</div>
<div class="t" style="left:125.7px;top:1381.4px;font-size:22px;color:#222;transform:scaleX(0.924);transform-origin:0 0;">1 row by 1 column</div>
<div class="a" style="left:1803px;top:1371px;width:2px;height:41px;background:#cfcfcf;"></div>
<div class="a" style="left:2056px;top:1371px;width:2px;height:41px;background:#cfcfcf;"></div>
<div class="a" style="left:2111px;top:1371px;width:2px;height:41px;background:#cfcfcf;"></div>
<div class="a" style="left:2164px;top:1371px;width:2px;height:41px;background:#cfcfcf;"></div>
<div class="a" style="left:2259px;top:1371px;width:2px;height:41px;background:#cfcfcf;"></div>
<div class="a" style="left:2400px;top:1371px;width:2px;height:41px;background:#cfcfcf;"></div>
<svg style="left:1814px;top:1375px" width="24" height="30" viewBox="0 0 24 30"><circle cx="11" cy="8" r="6" fill="none" stroke="#666" stroke-width="2"/><path d="M1.5 27V21Q1.5 17 6 17H16Q20.5 17 20.5 21V27Z" fill="none" stroke="#666" stroke-width="2"/></svg>
<div class="t" style="left:1856.0px;top:1381.4px;font-size:22px;color:#222;transform:scaleX(0.946);transform-origin:0 0;">Admin</div>
<svg style="left:2026px;top:1386px" width="16" height="9" viewBox="0 0 16 9"><path d="M0 0H15L7.5 8Z" fill="#222"/></svg>
<svg style="left:2274px;top:1382px" width="16" height="18" viewBox="0 0 16 18"><path d="M2 1V16" stroke="#b8b8b8" stroke-width="2"/><path d="M14 2L6 8.5L14 15Z" fill="#b8b8b8"/></svg>
<svg style="left:2306px;top:1382px" width="14" height="18" viewBox="0 0 14 18"><path d="M11 2L3 8.5L11 15Z" fill="#b8b8b8"/></svg>
<svg style="left:2340px;top:1382px" width="14" height="18" viewBox="0 0 14 18"><path d="M3 2L11 8.5L3 15Z" fill="#b8b8b8"/></svg>
<svg style="left:2368px;top:1382px" width="16" height="18" viewBox="0 0 16 18"><path d="M14 1V16" stroke="#b8b8b8" stroke-width="2"/><path d="M2 2L10 8.5L2 15Z" fill="#b8b8b8"/></svg>
<svg style="left:2419px;top:1381px" width="22" height="22" viewBox="0 0 22 22"><rect x="0" y="0" width="5" height="5" fill="#bbb"/><rect x="0" y="8" width="5" height="5" fill="#bbb"/><rect x="0" y="16" width="5" height="5" fill="#bbb"/><rect x="8" y="0" width="5" height="5" fill="#bbb"/><rect x="8" y="8" width="5" height="5" fill="#bbb"/><rect x="8" y="16" width="5" height="5" fill="#bbb"/><rect x="16" y="0" width="5" height="5" fill="#bbb"/><rect x="16" y="8" width="5" height="5" fill="#bbb"/><rect x="16" y="16" width="5" height="5" fill="#bbb"/></svg>
<svg style="left:2460px;top:1381px" width="24" height="22" viewBox="0 0 24 22"><rect x="0" y="0" width="24" height="13" fill="#aaa"/><rect x="0" y="16" width="6" height="5" fill="#aaa"/><rect x="9" y="16" width="6" height="5" fill="#aaa"/><rect x="18" y="16" width="6" height="5" fill="#aaa"/></svg>
<div class="a" style="left:2502px;top:1381px;width:24px;height:22px;background:#555;"></div>
<div class="a" style="left:0px;top:1411px;width:2552px;height:3px;background:#222;"></div>
</body></html>
